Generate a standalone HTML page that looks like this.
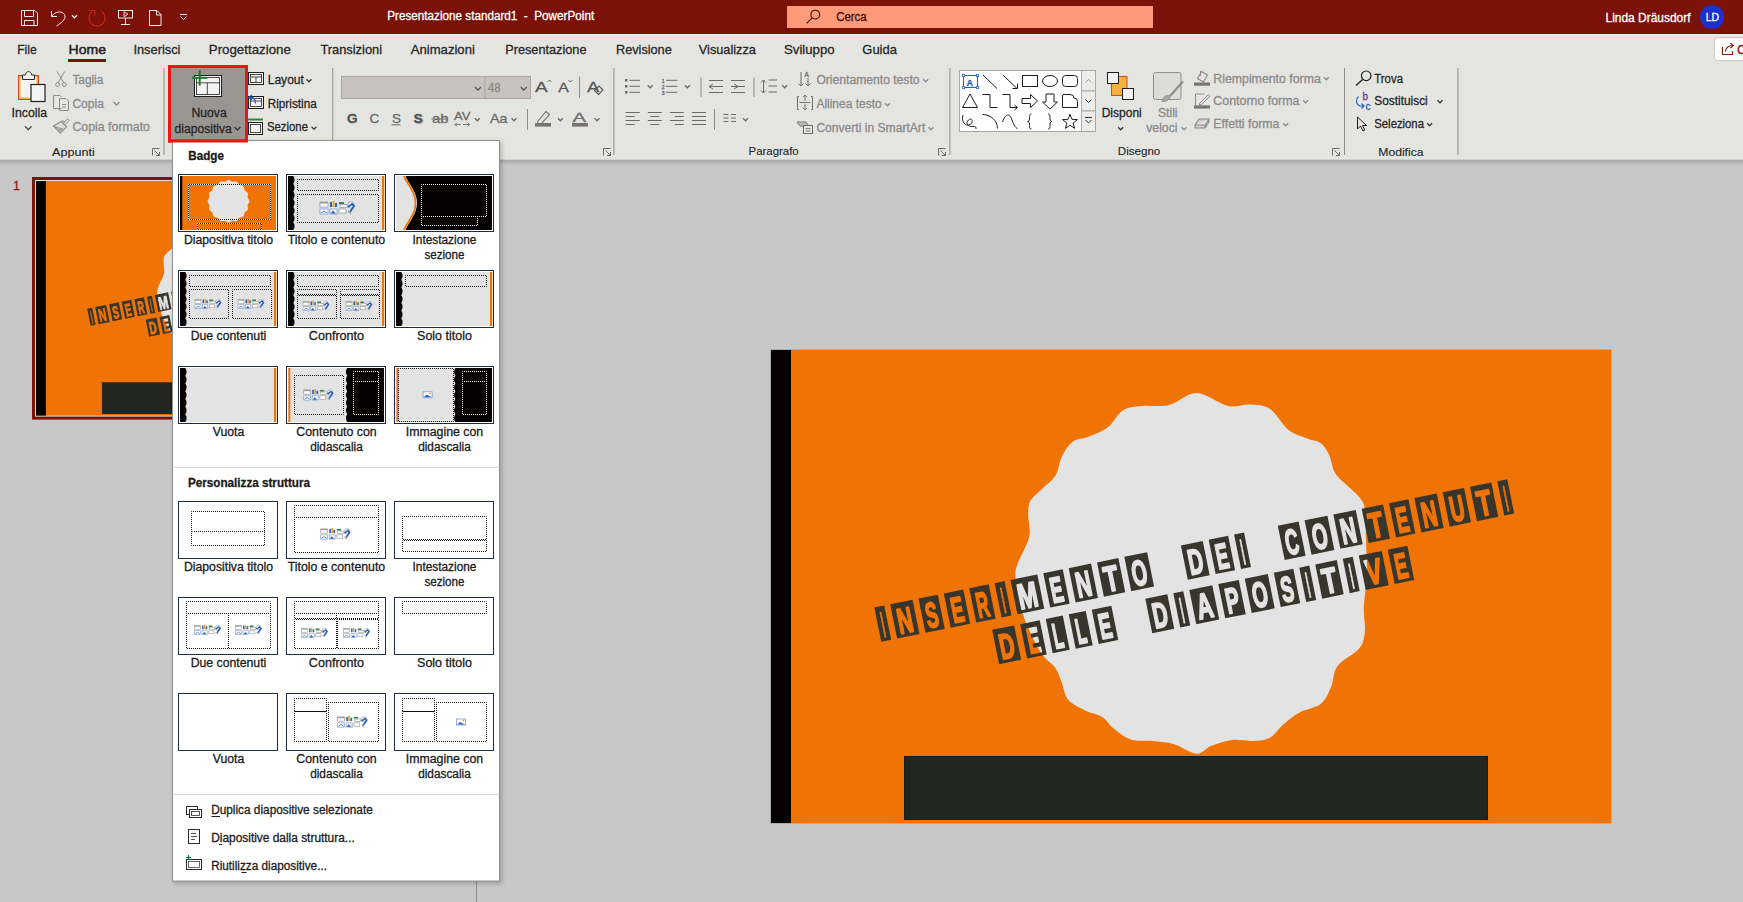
<!DOCTYPE html><html><head><meta charset="utf-8"><style>html,body{margin:0;padding:0;overflow:hidden;background:#c8c8c8}svg{display:block}</style></head><body>
<svg width="1743" height="902" viewBox="0 0 1743 902" font-family="Liberation Sans, sans-serif">
<defs>
<mask id="ttl" maskUnits="userSpaceOnUse" x="0" y="0" width="840" height="473">
<g transform="translate(103.3,257.5) rotate(-11.45)" font-family="Liberation Sans, sans-serif">
<g><rect x="0.00" y="0" width="10.13" height="35" fill="#fff"/><rect x="16.21" y="0" width="22.79" height="35" fill="#fff"/><rect x="45.08" y="0" width="19.75" height="35" fill="#fff"/><rect x="70.91" y="0" width="19.85" height="35" fill="#fff"/><rect x="96.84" y="0" width="19.85" height="35" fill="#fff"/><rect x="122.78" y="0" width="10.13" height="35" fill="#fff"/><rect x="138.98" y="0" width="27.35" height="35" fill="#fff"/><rect x="172.41" y="0" width="19.85" height="35" fill="#fff"/><rect x="198.35" y="0" width="22.79" height="35" fill="#fff"/><rect x="227.22" y="0" width="21.78" height="35" fill="#fff"/><rect x="255.07" y="0" width="23.30" height="35" fill="#fff"/><rect x="312.81" y="0" width="22.29" height="35" fill="#fff"/><rect x="341.18" y="0" width="19.85" height="35" fill="#fff"/><rect x="367.11" y="0" width="10.13" height="35" fill="#fff"/><rect x="411.68" y="0" width="21.27" height="35" fill="#fff"/><rect x="439.03" y="0" width="23.30" height="35" fill="#fff"/><rect x="468.41" y="0" width="22.79" height="35" fill="#fff"/><rect x="497.28" y="0" width="21.78" height="35" fill="#fff"/><rect x="525.14" y="0" width="19.85" height="35" fill="#fff"/><rect x="551.07" y="0" width="22.79" height="35" fill="#fff"/><rect x="579.94" y="0" width="21.78" height="35" fill="#fff"/><rect x="607.80" y="0" width="21.78" height="35" fill="#fff"/><rect x="635.66" y="0" width="10.13" height="35" fill="#fff"/><text x="5.06" y="31" font-size="35.5" font-weight="bold" text-anchor="middle" fill="#000" stroke="#000" stroke-width="2" stroke-linejoin="round" textLength="2.40" lengthAdjust="spacingAndGlyphs">I</text><text x="27.60" y="31" font-size="35.5" font-weight="bold" text-anchor="middle" fill="#000" stroke="#000" stroke-width="2" stroke-linejoin="round" textLength="15.29" lengthAdjust="spacingAndGlyphs">N</text><text x="54.96" y="31" font-size="35.5" font-weight="bold" text-anchor="middle" fill="#000" stroke="#000" stroke-width="2" stroke-linejoin="round" textLength="12.25" lengthAdjust="spacingAndGlyphs">S</text><text x="80.84" y="31" font-size="35.5" font-weight="bold" text-anchor="middle" fill="#000" stroke="#000" stroke-width="2" stroke-linejoin="round" textLength="12.35" lengthAdjust="spacingAndGlyphs">E</text><text x="106.77" y="31" font-size="35.5" font-weight="bold" text-anchor="middle" fill="#000" stroke="#000" stroke-width="2" stroke-linejoin="round" textLength="12.35" lengthAdjust="spacingAndGlyphs">R</text><text x="127.84" y="31" font-size="35.5" font-weight="bold" text-anchor="middle" fill="#000" stroke="#000" stroke-width="2" stroke-linejoin="round" textLength="2.40" lengthAdjust="spacingAndGlyphs">I</text><text x="152.66" y="31" font-size="35.5" font-weight="bold" text-anchor="middle" fill="#000" stroke="#000" stroke-width="2" stroke-linejoin="round" textLength="19.85" lengthAdjust="spacingAndGlyphs">M</text><text x="182.34" y="31" font-size="35.5" font-weight="bold" text-anchor="middle" fill="#000" stroke="#000" stroke-width="2" stroke-linejoin="round" textLength="12.35" lengthAdjust="spacingAndGlyphs">E</text><text x="209.74" y="31" font-size="35.5" font-weight="bold" text-anchor="middle" fill="#000" stroke="#000" stroke-width="2" stroke-linejoin="round" textLength="15.29" lengthAdjust="spacingAndGlyphs">N</text><text x="238.11" y="31" font-size="35.5" font-weight="bold" text-anchor="middle" fill="#000" stroke="#000" stroke-width="2" stroke-linejoin="round" textLength="14.28" lengthAdjust="spacingAndGlyphs">T</text><text x="266.72" y="31" font-size="35.5" font-weight="bold" text-anchor="middle" fill="#000" stroke="#000" stroke-width="2" stroke-linejoin="round" textLength="15.30" lengthAdjust="spacingAndGlyphs">O</text><text x="323.96" y="31" font-size="35.5" font-weight="bold" text-anchor="middle" fill="#000" stroke="#000" stroke-width="2" stroke-linejoin="round" textLength="14.79" lengthAdjust="spacingAndGlyphs">D</text><text x="351.11" y="31" font-size="35.5" font-weight="bold" text-anchor="middle" fill="#000" stroke="#000" stroke-width="2" stroke-linejoin="round" textLength="12.35" lengthAdjust="spacingAndGlyphs">E</text><text x="372.18" y="31" font-size="35.5" font-weight="bold" text-anchor="middle" fill="#000" stroke="#000" stroke-width="2" stroke-linejoin="round" textLength="2.40" lengthAdjust="spacingAndGlyphs">I</text><text x="422.32" y="31" font-size="35.5" font-weight="bold" text-anchor="middle" fill="#000" stroke="#000" stroke-width="2" stroke-linejoin="round" textLength="13.27" lengthAdjust="spacingAndGlyphs">C</text><text x="450.68" y="31" font-size="35.5" font-weight="bold" text-anchor="middle" fill="#000" stroke="#000" stroke-width="2" stroke-linejoin="round" textLength="15.30" lengthAdjust="spacingAndGlyphs">O</text><text x="479.81" y="31" font-size="35.5" font-weight="bold" text-anchor="middle" fill="#000" stroke="#000" stroke-width="2" stroke-linejoin="round" textLength="15.29" lengthAdjust="spacingAndGlyphs">N</text><text x="508.17" y="31" font-size="35.5" font-weight="bold" text-anchor="middle" fill="#000" stroke="#000" stroke-width="2" stroke-linejoin="round" textLength="14.28" lengthAdjust="spacingAndGlyphs">T</text><text x="535.07" y="31" font-size="35.5" font-weight="bold" text-anchor="middle" fill="#000" stroke="#000" stroke-width="2" stroke-linejoin="round" textLength="12.35" lengthAdjust="spacingAndGlyphs">E</text><text x="562.47" y="31" font-size="35.5" font-weight="bold" text-anchor="middle" fill="#000" stroke="#000" stroke-width="2" stroke-linejoin="round" textLength="15.29" lengthAdjust="spacingAndGlyphs">N</text><text x="590.83" y="31" font-size="35.5" font-weight="bold" text-anchor="middle" fill="#000" stroke="#000" stroke-width="2" stroke-linejoin="round" textLength="14.28" lengthAdjust="spacingAndGlyphs">U</text><text x="618.69" y="31" font-size="35.5" font-weight="bold" text-anchor="middle" fill="#000" stroke="#000" stroke-width="2" stroke-linejoin="round" textLength="14.28" lengthAdjust="spacingAndGlyphs">T</text><text x="640.72" y="31" font-size="35.5" font-weight="bold" text-anchor="middle" fill="#000" stroke="#000" stroke-width="2" stroke-linejoin="round" textLength="2.40" lengthAdjust="spacingAndGlyphs">I</text></g>
<g transform="translate(111.09,45.3)"><rect x="0.00" y="0" width="22.44" height="35" fill="#fff"/><rect x="28.56" y="0" width="19.99" height="35" fill="#fff"/><rect x="54.67" y="0" width="17.34" height="35" fill="#fff"/><rect x="78.13" y="0" width="17.34" height="35" fill="#fff"/><rect x="101.59" y="0" width="19.99" height="35" fill="#fff"/><rect x="156.26" y="0" width="22.44" height="35" fill="#fff"/><rect x="184.82" y="0" width="10.20" height="35" fill="#fff"/><rect x="201.14" y="0" width="23.46" height="35" fill="#fff"/><rect x="230.72" y="0" width="20.91" height="35" fill="#fff"/><rect x="257.75" y="0" width="23.46" height="35" fill="#fff"/><rect x="287.33" y="0" width="19.89" height="35" fill="#fff"/><rect x="313.34" y="0" width="10.20" height="35" fill="#fff"/><rect x="329.66" y="0" width="21.93" height="35" fill="#fff"/><rect x="357.71" y="0" width="10.20" height="35" fill="#fff"/><rect x="374.03" y="0" width="23.46" height="35" fill="#fff"/><rect x="403.61" y="0" width="19.99" height="35" fill="#fff"/><text x="11.22" y="31" font-size="35.5" font-weight="bold" text-anchor="middle" fill="#000" stroke="#000" stroke-width="2" stroke-linejoin="round" textLength="14.94" lengthAdjust="spacingAndGlyphs">D</text><text x="38.56" y="31" font-size="35.5" font-weight="bold" text-anchor="middle" fill="#000" stroke="#000" stroke-width="2" stroke-linejoin="round" textLength="12.49" lengthAdjust="spacingAndGlyphs">E</text><text x="63.34" y="31" font-size="35.5" font-weight="bold" text-anchor="middle" fill="#000" stroke="#000" stroke-width="2" stroke-linejoin="round" textLength="9.84" lengthAdjust="spacingAndGlyphs">L</text><text x="86.80" y="31" font-size="35.5" font-weight="bold" text-anchor="middle" fill="#000" stroke="#000" stroke-width="2" stroke-linejoin="round" textLength="9.84" lengthAdjust="spacingAndGlyphs">L</text><text x="111.59" y="31" font-size="35.5" font-weight="bold" text-anchor="middle" fill="#000" stroke="#000" stroke-width="2" stroke-linejoin="round" textLength="12.49" lengthAdjust="spacingAndGlyphs">E</text><text x="167.48" y="31" font-size="35.5" font-weight="bold" text-anchor="middle" fill="#000" stroke="#000" stroke-width="2" stroke-linejoin="round" textLength="14.94" lengthAdjust="spacingAndGlyphs">D</text><text x="189.92" y="31" font-size="35.5" font-weight="bold" text-anchor="middle" fill="#000" stroke="#000" stroke-width="2" stroke-linejoin="round" textLength="2.40" lengthAdjust="spacingAndGlyphs">I</text><text x="212.87" y="31" font-size="35.5" font-weight="bold" text-anchor="middle" fill="#000" stroke="#000" stroke-width="2" stroke-linejoin="round" textLength="15.96" lengthAdjust="spacingAndGlyphs">A</text><text x="241.18" y="31" font-size="35.5" font-weight="bold" text-anchor="middle" fill="#000" stroke="#000" stroke-width="2" stroke-linejoin="round" textLength="13.41" lengthAdjust="spacingAndGlyphs">P</text><text x="269.48" y="31" font-size="35.5" font-weight="bold" text-anchor="middle" fill="#000" stroke="#000" stroke-width="2" stroke-linejoin="round" textLength="15.46" lengthAdjust="spacingAndGlyphs">O</text><text x="297.28" y="31" font-size="35.5" font-weight="bold" text-anchor="middle" fill="#000" stroke="#000" stroke-width="2" stroke-linejoin="round" textLength="12.39" lengthAdjust="spacingAndGlyphs">S</text><text x="318.44" y="31" font-size="35.5" font-weight="bold" text-anchor="middle" fill="#000" stroke="#000" stroke-width="2" stroke-linejoin="round" textLength="2.40" lengthAdjust="spacingAndGlyphs">I</text><text x="340.63" y="31" font-size="35.5" font-weight="bold" text-anchor="middle" fill="#000" stroke="#000" stroke-width="2" stroke-linejoin="round" textLength="14.43" lengthAdjust="spacingAndGlyphs">T</text><text x="362.81" y="31" font-size="35.5" font-weight="bold" text-anchor="middle" fill="#000" stroke="#000" stroke-width="2" stroke-linejoin="round" textLength="2.40" lengthAdjust="spacingAndGlyphs">I</text><text x="385.76" y="31" font-size="35.5" font-weight="bold" text-anchor="middle" fill="#000" stroke="#000" stroke-width="2" stroke-linejoin="round" textLength="15.96" lengthAdjust="spacingAndGlyphs">V</text><text x="413.61" y="31" font-size="35.5" font-weight="bold" text-anchor="middle" fill="#000" stroke="#000" stroke-width="2" stroke-linejoin="round" textLength="12.49" lengthAdjust="spacingAndGlyphs">E</text></g>
</g></mask>
<g id="slide">
<rect x="0" y="0" width="840" height="473" fill="#f07305" />
<rect x="0" y="0" width="20" height="473" fill="#040100" />
<path d="M425.50 43.10 C435.27 43.27 447.98 54.08 456.90 56.00 C465.82 57.92 471.98 54.10 479.00 54.60 C486.02 55.10 492.50 54.72 499.00 59.00 C505.50 63.28 511.67 75.35 518.00 80.30 C524.33 85.25 531.73 86.58 537.00 88.70 C542.27 90.82 546.10 90.37 549.60 93.00 C553.10 95.63 555.53 99.42 558.00 104.50 C560.47 109.58 560.90 117.92 564.40 123.50 C567.90 129.08 574.80 133.78 579.00 138.00 C583.20 142.22 587.10 145.13 589.60 148.80 C592.10 152.47 593.10 153.13 594.00 160.00 C594.90 166.87 594.67 179.17 595.00 190.00 C595.33 200.83 596.37 213.83 596.00 225.00 C595.63 236.17 593.17 247.43 592.80 257.00 C592.43 266.57 594.68 275.35 593.80 282.40 C592.92 289.45 592.05 293.70 587.50 299.30 C582.95 304.90 571.08 309.68 566.50 316.00 C561.92 322.32 562.82 330.87 560.00 337.20 C557.18 343.53 554.85 349.78 549.60 354.00 C544.35 358.22 534.82 359.00 528.50 362.50 C522.18 366.00 516.62 370.80 511.70 375.00 C506.78 379.20 503.92 385.03 499.00 387.70 C494.08 390.37 488.53 390.62 482.20 391.00 C475.87 391.38 468.03 389.17 461.00 390.00 C453.97 390.83 445.92 393.72 440.00 396.00 C434.08 398.28 431.75 404.03 425.50 403.70 C419.25 403.37 409.83 396.12 402.50 394.00 C395.17 391.88 388.52 391.70 381.50 391.00 C374.48 390.30 366.73 391.75 360.40 389.80 C354.07 387.85 348.42 383.15 343.50 379.30 C338.58 375.45 335.82 369.85 330.90 366.70 C325.98 363.55 319.62 363.22 314.00 360.40 C308.38 357.58 301.05 354.37 297.20 349.80 C293.35 345.23 293.00 338.27 290.90 333.00 C288.80 327.73 287.75 322.77 284.60 318.20 C281.45 313.63 276.27 311.63 272.00 305.60 C267.73 299.57 262.83 290.43 259.00 282.00 C255.17 273.57 251.42 264.07 249.00 255.00 C246.58 245.93 244.90 234.43 244.50 227.60 C244.10 220.77 244.32 220.82 246.60 214.00 C248.88 207.18 256.43 194.77 258.20 186.70 C259.97 178.63 257.02 171.57 257.20 165.60 C257.38 159.63 256.85 155.47 259.30 150.90 C261.75 146.33 267.68 142.42 271.90 138.20 C276.12 133.98 281.43 130.87 284.60 125.60 C287.77 120.33 288.10 112.22 290.90 106.60 C293.70 100.98 296.83 95.23 301.40 91.90 C305.97 88.57 312.33 89.07 318.30 86.60 C324.27 84.13 331.58 81.48 337.20 77.10 C342.82 72.72 346.37 63.82 352.00 60.30 C357.63 56.78 363.28 56.88 371.00 56.00 C378.72 55.12 389.22 57.15 398.30 55.00 C407.38 52.85 415.73 42.93 425.50 43.10 Z" fill="#e3e3e3"/>
<rect x="133.5" y="406.5" width="583" height="63" fill="#22261e" stroke="#1b1d17"/>
<rect x="0" y="0" width="840" height="473" fill="#38362c" mask="url(#ttl)"/>
</g>
</defs>
<rect x="0" y="0" width="1743" height="34" fill="#7b1109" />
<rect x="0" y="33" width="1743" height="1" fill="#6e0c05" />
<rect x="0" y="34" width="1743" height="126" fill="#e4e4e0" />
<rect x="0" y="34" width="1743" height="1" fill="#eef0ec" />
<path d="M21.5 10.5 H35 L37.5 13 V25.5 H21.5 Z" fill="none" stroke="#f4eeee" stroke-width="1" />
<path d="M24.5 10.5 V16.5 H33.5 V10.5" fill="none" stroke="#f4eeee" stroke-width="1" />
<path d="M24.5 25.5 V20.5 H34 V25.5" fill="none" stroke="#f4eeee" stroke-width="1" />
<path d="M51.5 11 V16.5 H57" fill="none" stroke="#f4eeee" stroke-width="1" />
<path d="M51.8 16.3 C55 11.5 62 10.5 64.5 14.5 C66.5 18 63 22 56.5 26" fill="none" stroke="#f4eeee" stroke-width="1" />
<path d="M72.0 15.2 L74.5 17.8 L77.0 15.2" fill="none" stroke="#f4eeee" stroke-width="1.25" />
<path d="M101.36 11.29 A8 8 0 1 1 91.97 11.78" fill="none" stroke="#c8281a" stroke-width="1.1" />
<path d="M89 10.5 H94.8 V15.8" fill="none" stroke="#c8281a" stroke-width="1.1" />
<rect x="118.5" y="10.5" width="14" height="7.5" fill="none" stroke="#f4eeee" stroke-width="1" />
<path d="M124 11.8 L128 14.2 L124 16.6 Z" fill="none" stroke="#f4eeee" stroke-width="0.9" />
<line x1="125.5" y1="18" x2="125.5" y2="24.5" stroke="#f4eeee" stroke-width="1" />
<line x1="121" y1="24.5" x2="130" y2="24.5" stroke="#f4eeee" stroke-width="1" />
<path d="M149.5 10.5 H157 L161 14.5 V25.5 H149.5 Z" fill="none" stroke="#f4eeee" stroke-width="1" />
<path d="M156.5 10.5 V15 H161" fill="none" stroke="#f4eeee" stroke-width="1" />
<line x1="180" y1="14.5" x2="187" y2="14.5" stroke="#f4eeee" stroke-width="1" />
<path d="M180.5 16.5 L183.5 19.5 L186.5 16.5" fill="none" stroke="#f4eeee" stroke-width="1" />
<text x="387.20" y="20.20" font-size="12" fill="#ffffff" textLength="206.96" lengthAdjust="spacingAndGlyphs"  stroke="#ffffff" stroke-width="0.28">Presentazione standard1 &#160;- &#160;PowerPoint</text>
<rect x="787" y="6" width="366" height="22" fill="#fe997a" />
<circle cx="815.3" cy="14.6" r="4.4" fill="none" stroke="#3a0c06" stroke-width="1.1"/>
<line x1="812.2" y1="17.8" x2="806.6" y2="23.4" stroke="#3a0c06" stroke-width="1.2" />
<text x="836.20" y="20.80" font-size="12" fill="#3a0c06" textLength="30.46" lengthAdjust="spacingAndGlyphs"  stroke="#3a0c06" stroke-width="0.28">Cerca</text>
<text x="1605.50" y="21.80" font-size="12" fill="#ffffff" textLength="84.96" lengthAdjust="spacingAndGlyphs"  stroke="#ffffff" stroke-width="0.28">Linda Dräusdorf</text>
<circle cx="1712" cy="17" r="12" fill="#1b2fd3"/>
<text x="1712.50" y="21.00" font-size="10.5" fill="#ffffff" text-anchor="middle"  stroke="#ffffff" stroke-width="0.28">LD</text>
<text x="17.20" y="54.20" font-size="13" fill="#262626" textLength="19.44" lengthAdjust="spacingAndGlyphs"  stroke="#262626" stroke-width="0.28">File</text>
<text x="68.60" y="54.20" font-size="13" fill="#1e1e1e" textLength="37.44" lengthAdjust="spacingAndGlyphs" stroke="#1e1e1e" stroke-width="0.45">Home</text>
<text x="133.40" y="54.20" font-size="13" fill="#262626" textLength="47.04" lengthAdjust="spacingAndGlyphs"  stroke="#262626" stroke-width="0.28">Inserisci</text>
<text x="208.80" y="54.20" font-size="13" fill="#262626" textLength="82.04" lengthAdjust="spacingAndGlyphs"  stroke="#262626" stroke-width="0.28">Progettazione</text>
<text x="320.40" y="54.20" font-size="13" fill="#262626" textLength="61.64" lengthAdjust="spacingAndGlyphs"  stroke="#262626" stroke-width="0.28">Transizioni</text>
<text x="410.80" y="54.20" font-size="13" fill="#262626" textLength="64.04" lengthAdjust="spacingAndGlyphs"  stroke="#262626" stroke-width="0.28">Animazioni</text>
<text x="505.20" y="54.20" font-size="13" fill="#262626" textLength="81.34" lengthAdjust="spacingAndGlyphs"  stroke="#262626" stroke-width="0.28">Presentazione</text>
<text x="616.00" y="54.20" font-size="13" fill="#262626" textLength="55.74" lengthAdjust="spacingAndGlyphs"  stroke="#262626" stroke-width="0.28">Revisione</text>
<text x="698.80" y="54.20" font-size="13" fill="#262626" textLength="57.04" lengthAdjust="spacingAndGlyphs"  stroke="#262626" stroke-width="0.28">Visualizza</text>
<text x="784.00" y="54.20" font-size="13" fill="#262626" textLength="50.64" lengthAdjust="spacingAndGlyphs"  stroke="#262626" stroke-width="0.28">Sviluppo</text>
<text x="862.30" y="54.20" font-size="13" fill="#262626" textLength="34.64" lengthAdjust="spacingAndGlyphs"  stroke="#262626" stroke-width="0.28">Guida</text>
<rect x="68" y="59" width="38" height="3" fill="#7b1109" />
<rect x="1714.5" y="37.5" width="60" height="23" rx="3" fill="#ffffff" stroke="#c9c9c6"/>
<path d="M1722.5 47 V54.5 H1732.5 V51" fill="none" stroke="#8b1a10" stroke-width="1.1" />
<path d="M1725.5 51.5 C1726 47 1729 45.5 1733 45.5 M1730.5 43 L1733.3 45.5 L1730.5 48" fill="none" stroke="#8b1a10" stroke-width="1.1" />
<text x="1737.00" y="54.00" font-size="12.5" fill="#8b1a10" stroke="#8b1a10" stroke-width="0.4">C</text>
<rect x="18.5" y="75.5" width="20" height="24" fill="#f6b143" stroke="#d4461f" stroke-width="1"/>
<rect x="20.5" y="77.5" width="16" height="20" fill="#f3f3f3" />
<path d="M22.5 79.5 V75 H25.5 C25.5 70.5 31.5 70.5 31.5 75 H34.5 V79.5 Z" fill="#f3f3f3" stroke="#2b2b2b" stroke-width="1" />
<rect x="31" y="84.5" width="14" height="17" fill="#f3f3f3" stroke="#1e1e1e" stroke-width="1.2" />
<text x="11.60" y="117.00" font-size="12" fill="#262626" textLength="35.36" lengthAdjust="spacingAndGlyphs"  stroke="#262626" stroke-width="0.28">Incolla</text>
<path d="M25.1 126.4 L28.3 129.6 L31.5 126.4" fill="none" stroke="#333" stroke-width="1.25" />
<circle cx="57.6" cy="84.6" r="1.9" fill="none" stroke="#8a8a8a"/>
<circle cx="64.3" cy="84.6" r="1.9" fill="none" stroke="#8a8a8a"/>
<path d="M57 71.5 L63.6 82.6 M64.6 71.5 L58.2 82.6" fill="none" stroke="#8a8a8a" stroke-width="1" />
<text x="72.40" y="84.00" font-size="12" fill="#8a8a8a" textLength="30.96" lengthAdjust="spacingAndGlyphs"  stroke="#8a8a8a" stroke-width="0.28">Taglia</text>
<path d="M61.5 108.5 H53.5 V95.5 H60 L61.5 97" fill="none" stroke="#8a8a8a" stroke-width="1" />
<path d="M59.5 98.5 H66 L68.5 101 V110.5 H59.5 Z" fill="none" stroke="#8a8a8a" stroke-width="1" />
<path d="M62 104.5 H66 M62 107 H66" fill="none" stroke="#8a8a8a" stroke-width="1" />
<text x="72.40" y="107.70" font-size="12" fill="#8a8a8a" textLength="31.56" lengthAdjust="spacingAndGlyphs"  stroke="#8a8a8a" stroke-width="0.28">Copia</text>
<path d="M113.5 102.0 L116.5 105.0 L119.5 102.0" fill="none" stroke="#8a8a8a" stroke-width="1.25" />
<path d="M53.4 126 L61.2 121.5 L66.6 126.8 L60.2 133.2 Z" fill="#dcdcd8" stroke="#8a8a8a" stroke-width="1.1" />
<path d="M54.5 126.8 L64 129.5" fill="none" stroke="#8a8a8a" stroke-width="1" />
<path d="M60.2 133.2 L64 129.5 L56 128 Z" fill="#a8a8a8" stroke="none" stroke-width="1" />
<path d="M61.5 121.8 L63 120.5 L64.5 122.5 L63.5 123.5" fill="none" stroke="#8a8a8a" stroke-width="1" />
<path d="M63.3 123 L67.3 119.2 M65 124.8 L68.8 121" fill="none" stroke="#8a8a8a" stroke-width="1" />
<path d="M67.3 119.2 A1.2 1.2 0 0 1 68.8 121" fill="none" stroke="#8a8a8a" stroke-width="1" />
<text x="72.40" y="131.30" font-size="12" fill="#8a8a8a" textLength="77.56" lengthAdjust="spacingAndGlyphs"  stroke="#8a8a8a" stroke-width="0.28">Copia formato</text>
<text x="52.00" y="155.60" font-size="11.5" fill="#262626" textLength="42.92" lengthAdjust="spacingAndGlyphs" stroke="#262626" stroke-width="0.12">Appunti</text>
<path d="M152.5 155.5 V148.5 H159.5" fill="none" stroke="#6a6a6a" stroke-width="1" />
<path d="M154.5 150.5 L159.5 155.5 M156 155.5 H159.5 V152" fill="none" stroke="#6a6a6a" stroke-width="1" />
<rect x="163.5" y="68" width="1" height="87" fill="#8e8e8a" />
<rect x="169.5" y="66.5" width="77" height="74.5" fill="#999591" stroke="#f01414" stroke-width="3" />
<rect x="194.5" y="75.5" width="27" height="21" fill="#f3f3f3" stroke="#1e1e1e" stroke-width="1" />
<rect x="196.5" y="77.5" width="23" height="17" fill="none" stroke="#1e1e1e" stroke-width="0.8" />
<line x1="196.5" y1="82.8" x2="219.5" y2="82.8" stroke="#1e1e1e" stroke-width="0.8" />
<line x1="207.3" y1="82.8" x2="207.3" y2="94.5" stroke="#1e1e1e" stroke-width="0.8" />
<line x1="192" y1="77.8" x2="207.5" y2="77.8" stroke="#1a7a30" stroke-width="2" />
<line x1="199.7" y1="70.2" x2="199.7" y2="85.6" stroke="#1a7a30" stroke-width="2" />
<text x="191.40" y="116.80" font-size="12" fill="#262626" textLength="35.36" lengthAdjust="spacingAndGlyphs"  stroke="#262626" stroke-width="0.28">Nuova</text>
<text x="174.60" y="132.80" font-size="12" fill="#262626" textLength="57.16" lengthAdjust="spacingAndGlyphs"  stroke="#262626" stroke-width="0.28">diapositiva</text>
<path d="M234.4 127.0 L237.4 130.0 L240.4 127.0" fill="none" stroke="#333" stroke-width="1.25" />
<rect x="248.5" y="72.5" width="15" height="12" fill="#f3f3f3" stroke="#1e1e1e" stroke-width="1" />
<rect x="250.5" y="74.5" width="11" height="8" fill="none" stroke="#1e1e1e" stroke-width="0.8" />
<line x1="250.5" y1="77" x2="261.5" y2="77" stroke="#1e1e1e" stroke-width="0.8" />
<line x1="256" y1="77" x2="256" y2="82.5" stroke="#1e1e1e" stroke-width="0.8" />
<text x="267.70" y="83.90" font-size="12" fill="#262626" textLength="36.26" lengthAdjust="spacingAndGlyphs"  stroke="#262626" stroke-width="0.28">Layout</text>
<path d="M306.5 79.2 L309.0 81.8 L311.5 79.2" fill="none" stroke="#333" stroke-width="1.25" />
<rect x="248.5" y="96.5" width="15" height="12" fill="#f3f3f3" stroke="#1e1e1e" stroke-width="1" />
<rect x="250.5" y="98.5" width="11" height="8" fill="none" stroke="#1e1e1e" stroke-width="0.8" />
<line x1="250.5" y1="101" x2="261.5" y2="101" stroke="#1e1e1e" stroke-width="0.8" />
<path d="M255.5 103.5 C255.5 99 253.5 97 249.5 97.5 M251.8 95 L249.2 97.5 L251.8 100" fill="none" stroke="#1d5dc4" stroke-width="1.3" />
<text x="267.70" y="107.70" font-size="12" fill="#262626" textLength="49.06" lengthAdjust="spacingAndGlyphs"  stroke="#262626" stroke-width="0.28">Ripristina</text>
<rect x="248" y="118.5" width="15" height="2" fill="#2a8a3a" />
<rect x="248.5" y="122.5" width="14" height="12" fill="#f3f3f3" stroke="#1e1e1e" stroke-width="1" />
<rect x="250.5" y="124.5" width="10" height="8" fill="none" stroke="#1e1e1e" stroke-width="0.8" />
<text x="267.00" y="131.30" font-size="12" fill="#262626" textLength="40.96" lengthAdjust="spacingAndGlyphs"  stroke="#262626" stroke-width="0.28">Sezione</text>
<path d="M311.5 126.8 L314.0 129.2 L316.5 126.8" fill="none" stroke="#333" stroke-width="1.25" />
<rect x="332.3" y="68" width="1" height="87" fill="#8e8e8a" />
<rect x="341.5" y="76.5" width="189" height="22" fill="#c7c4bf" stroke="#a9a6a1" stroke-width="1" />
<rect x="484.5" y="77" width="1" height="21" fill="#a9a6a1" />
<path d="M475.0 87.0 L478.0 90.0 L481.0 87.0" fill="none" stroke="#555" stroke-width="1.25" />
<path d="M520.8 87.0 L523.8 90.0 L526.8 87.0" fill="none" stroke="#555" stroke-width="1.25" />
<text x="488.00" y="92.00" font-size="12" fill="#8c8478" textLength="12.46" lengthAdjust="spacingAndGlyphs"  stroke="#8c8478" stroke-width="0.28">48</text>
<text x="535.00" y="91.60" font-size="15" fill="#555" textLength="12.70" lengthAdjust="spacingAndGlyphs"  stroke="#555" stroke-width="0.28">A</text>
<path d="M547.5 82 L549.5 80 L551.5 82" fill="none" stroke="#555" stroke-width="0.9" />
<text x="558.30" y="91.60" font-size="12.5" fill="#555" textLength="10.50" lengthAdjust="spacingAndGlyphs"  stroke="#555" stroke-width="0.28">A</text>
<path d="M568.5 80 L570.5 82 L572.5 80" fill="none" stroke="#555" stroke-width="0.9" />
<rect x="579" y="76.5" width="1" height="21.5" fill="#8e8e8a" />
<text x="587.00" y="91.50" font-size="15" fill="#555" textLength="12.20" lengthAdjust="spacingAndGlyphs"  stroke="#555" stroke-width="0.28">A</text>
<path d="M594.5 90.5 L599 86 L603 90 L598.5 94.5 Z" fill="none" stroke="#555" stroke-width="1.1" />
<text x="347.00" y="123.30" font-size="13" fill="#505050" font-weight="bold" textLength="10.54" lengthAdjust="spacingAndGlyphs"  stroke="#505050" stroke-width="0.28">G</text>
<text x="369.60" y="123.30" font-size="13" fill="#6a6a6a" textLength="9.74" lengthAdjust="spacingAndGlyphs"  stroke="#6a6a6a" stroke-width="0.28">C</text>
<text x="392.00" y="123.00" font-size="12.5" fill="#6a6a6a" textLength="9.00" lengthAdjust="spacingAndGlyphs"  stroke="#6a6a6a" stroke-width="0.28">S</text>
<line x1="391.5" y1="124.8" x2="400.5" y2="124.8" stroke="#6a6a6a" stroke-width="1" />
<text x="414.50" y="124.00" font-size="13.5" fill="#bcbcbc" font-weight="bold" textLength="9.28" lengthAdjust="spacingAndGlyphs"  stroke="#bcbcbc" stroke-width="0.28">S</text>
<text x="413.50" y="123.30" font-size="13.5" fill="#505050" font-weight="bold" textLength="9.28" lengthAdjust="spacingAndGlyphs"  stroke="#505050" stroke-width="0.28">S</text>
<text x="432.00" y="123.30" font-size="12.5" fill="#6a6a6a" textLength="16.50" lengthAdjust="spacingAndGlyphs"  stroke="#6a6a6a" stroke-width="0.28">ab</text>
<line x1="431.5" y1="119" x2="447.5" y2="119" stroke="#6a6a6a" stroke-width="1" />
<text x="454.00" y="119.50" font-size="11" fill="#6a6a6a" textLength="16.38" lengthAdjust="spacingAndGlyphs"  stroke="#6a6a6a" stroke-width="0.28">AV</text>
<path d="M455 124.5 H461 M455 124.5 L457 122.5 M455 124.5 L457 126.5 M463 124.5 H469.5 M469.5 124.5 L467.5 122.5 M469.5 124.5 L467.5 126.5" fill="none" stroke="#6a6a6a" stroke-width="0.9" />
<path d="M474.8 118.2 L477.3 120.8 L479.8 118.2" fill="none" stroke="#6a6a6a" stroke-width="1.25" />
<text x="490.00" y="123.30" font-size="13" fill="#6a6a6a" textLength="17.44" lengthAdjust="spacingAndGlyphs"  stroke="#6a6a6a" stroke-width="0.28">Aa</text>
<path d="M511.5 118.2 L514.0 120.8 L516.5 118.2" fill="none" stroke="#6a6a6a" stroke-width="1.25" />
<rect x="527" y="109" width="1" height="21" fill="#8e8e8a" />
<path d="M538 121 L546 111.5 L549.5 114.5 L541.5 123.5 L537.5 123.5 Z" fill="none" stroke="#6a6a6a" stroke-width="1.1" />
<rect x="535" y="123" width="16" height="3.6" fill="#7a746e" />
<path d="M557.9 118.2 L560.4 120.8 L562.9 118.2" fill="none" stroke="#6a6a6a" stroke-width="1.25" />
<text x="572.50" y="121.50" font-size="13.5" fill="#6a6a6a" textLength="13.58" lengthAdjust="spacingAndGlyphs"  stroke="#6a6a6a" stroke-width="0.28">A</text>
<rect x="572" y="123" width="16" height="3.6" fill="#7a746e" />
<path d="M594.5 118.2 L597.0 120.8 L599.5 118.2" fill="none" stroke="#6a6a6a" stroke-width="1.25" />
<path d="M603.5 155.5 V148.5 H610.5" fill="none" stroke="#6a6a6a" stroke-width="1" />
<path d="M605.5 150.5 L610.5 155.5 M607 155.5 H610.5 V152" fill="none" stroke="#6a6a6a" stroke-width="1" />
<rect x="613.4" y="68" width="1" height="87" fill="#8e8e8a" />
<rect x="625" y="79" width="2.5" height="2.5" fill="#6a6a6a" />
<rect x="625" y="85" width="2.5" height="2.5" fill="#6a6a6a" />
<rect x="625" y="91" width="2.5" height="2.5" fill="#6a6a6a" />
<line x1="629.5" y1="80.3" x2="640.0" y2="80.3" stroke="#6a6a6a" stroke-width="1" />
<line x1="629.5" y1="86.3" x2="640.0" y2="86.3" stroke="#6a6a6a" stroke-width="1" />
<line x1="629.5" y1="92.3" x2="640.0" y2="92.3" stroke="#6a6a6a" stroke-width="1" />
<path d="M647.7 85.2 L650.2 87.8 L652.7 85.2" fill="none" stroke="#6a6a6a" stroke-width="1.25" />
<text x="661.80" y="82.50" font-size="5" fill="#6a6a6a"  stroke="#6a6a6a" stroke-width="0.28">1</text>
<text x="661.80" y="88.50" font-size="5" fill="#6a6a6a"  stroke="#6a6a6a" stroke-width="0.28">2</text>
<text x="661.80" y="94.50" font-size="5" fill="#6a6a6a"  stroke="#6a6a6a" stroke-width="0.28">3</text>
<line x1="666" y1="80.3" x2="677.3" y2="80.3" stroke="#6a6a6a" stroke-width="1" />
<line x1="666" y1="86.3" x2="677.3" y2="86.3" stroke="#6a6a6a" stroke-width="1" />
<line x1="666" y1="92.3" x2="677.3" y2="92.3" stroke="#6a6a6a" stroke-width="1" />
<path d="M684.8 85.2 L687.3 87.8 L689.8 85.2" fill="none" stroke="#6a6a6a" stroke-width="1.25" />
<rect x="700.5" y="77.5" width="1" height="19.5" fill="#8e8e8a" />
<line x1="709" y1="80.5" x2="723" y2="80.5" stroke="#6a6a6a" stroke-width="1" />
<line x1="709" y1="86.5" x2="723" y2="86.5" stroke="#6a6a6a" stroke-width="1" />
<line x1="709" y1="92.5" x2="723" y2="92.5" stroke="#6a6a6a" stroke-width="1" />
<path d="M709 86.5 L713 84 M709 86.5 L713 89 M709 86.5 H716" fill="none" stroke="#6a6a6a" stroke-width="1" />
<line x1="731" y1="80.5" x2="745" y2="80.5" stroke="#6a6a6a" stroke-width="1" />
<line x1="731" y1="86.5" x2="745" y2="86.5" stroke="#6a6a6a" stroke-width="1" />
<line x1="731" y1="92.5" x2="745" y2="92.5" stroke="#6a6a6a" stroke-width="1" />
<path d="M738 86.5 L734 84 M738 86.5 L734 89 M738 86.5 H731" fill="none" stroke="#6a6a6a" stroke-width="1" />
<rect x="753.5" y="77.5" width="1" height="19.5" fill="#8e8e8a" />
<path d="M763.5 80 V93 M761 82.5 L763.5 80 L766 82.5 M761 90.5 L763.5 93 L766 90.5" fill="none" stroke="#6a6a6a" stroke-width="1" />
<line x1="768.5" y1="80" x2="777.0" y2="80" stroke="#6a6a6a" stroke-width="1" />
<line x1="768.5" y1="86" x2="777.0" y2="86" stroke="#6a6a6a" stroke-width="1" />
<line x1="768.5" y1="92" x2="777.0" y2="92" stroke="#6a6a6a" stroke-width="1" />
<path d="M782.2 85.2 L784.7 87.8 L787.2 85.2" fill="none" stroke="#6a6a6a" stroke-width="1.25" />
<path d="M801 72 V86 M798.5 83.5 L801 86 L803.5 83.5 M808 78 V86 M805.5 83.5 L808 86 L810.5 83.5" fill="none" stroke="#6a6a6a" stroke-width="1" />
<text x="804.50" y="76.50" font-size="6.5" fill="#6a6a6a"  stroke="#6a6a6a" stroke-width="0.28">A</text>
<text x="816.40" y="84.00" font-size="12" fill="#8a8a8a" textLength="103.16" lengthAdjust="spacingAndGlyphs"  stroke="#8a8a8a" stroke-width="0.28">Orientamento testo</text>
<path d="M923.2 79.2 L925.7 81.8 L928.2 79.2" fill="none" stroke="#8a8a8a" stroke-width="1.25" />
<path d="M799 96.5 H797.5 V109.5 H799 M811 96.5 H812.5 V109.5 H811" fill="none" stroke="#6a6a6a" stroke-width="1" />
<path d="M805 95 V101 M803 97 L805 95 L807 97 M805 104 V110 M803 108 L805 110 L807 108 M799.5 102.5 H810.5" fill="none" stroke="#6a6a6a" stroke-width="0.9" />
<text x="816.40" y="108.20" font-size="12" fill="#8a8a8a" textLength="65.26" lengthAdjust="spacingAndGlyphs"  stroke="#8a8a8a" stroke-width="0.28">Allinea testo</text>
<path d="M885.0 103.2 L887.5 105.8 L890.0 103.2" fill="none" stroke="#8a8a8a" stroke-width="1.25" />
<path d="M797 122 H806 L809 126 H800 Z" fill="#bdbdbd" stroke="#6a6a6a" stroke-width="0.9" />
<rect x="803.5" y="125.5" width="9" height="8" fill="#e4e4e0" stroke="#6a6a6a" stroke-width="1" />
<path d="M805.5 128.5 H810.5 M805.5 130.8 H810.5" fill="none" stroke="#6a6a6a" stroke-width="0.8" />
<text x="816.40" y="131.90" font-size="12" fill="#8a8a8a" textLength="108.86" lengthAdjust="spacingAndGlyphs"  stroke="#8a8a8a" stroke-width="0.28">Converti in SmartArt</text>
<path d="M928.5 127.2 L931.0 129.8 L933.5 127.2" fill="none" stroke="#8a8a8a" stroke-width="1.25" />
<line x1="625.7" y1="112.5" x2="639.7" y2="112.5" stroke="#6a6a6a" stroke-width="1" />
<line x1="625.7" y1="116.5" x2="634.7" y2="116.5" stroke="#6a6a6a" stroke-width="1" />
<line x1="625.7" y1="120.5" x2="639.7" y2="120.5" stroke="#6a6a6a" stroke-width="1" />
<line x1="625.7" y1="124.5" x2="634.7" y2="124.5" stroke="#6a6a6a" stroke-width="1" />
<line x1="647.8" y1="112.5" x2="661.8" y2="112.5" stroke="#6a6a6a" stroke-width="1" />
<line x1="650.3" y1="116.5" x2="659.3" y2="116.5" stroke="#6a6a6a" stroke-width="1" />
<line x1="647.8" y1="120.5" x2="661.8" y2="120.5" stroke="#6a6a6a" stroke-width="1" />
<line x1="650.3" y1="124.5" x2="659.3" y2="124.5" stroke="#6a6a6a" stroke-width="1" />
<line x1="669.8" y1="112.5" x2="683.8" y2="112.5" stroke="#6a6a6a" stroke-width="1" />
<line x1="674.8" y1="116.5" x2="683.8" y2="116.5" stroke="#6a6a6a" stroke-width="1" />
<line x1="669.8" y1="120.5" x2="683.8" y2="120.5" stroke="#6a6a6a" stroke-width="1" />
<line x1="674.8" y1="124.5" x2="683.8" y2="124.5" stroke="#6a6a6a" stroke-width="1" />
<line x1="692" y1="112.5" x2="706" y2="112.5" stroke="#6a6a6a" stroke-width="1" />
<line x1="692" y1="116.5" x2="706" y2="116.5" stroke="#6a6a6a" stroke-width="1" />
<line x1="692" y1="120.5" x2="706" y2="120.5" stroke="#6a6a6a" stroke-width="1" />
<line x1="692" y1="124.5" x2="706" y2="124.5" stroke="#6a6a6a" stroke-width="1" />
<rect x="714" y="109" width="1" height="21" fill="#8e8e8a" />
<line x1="723.5" y1="114.5" x2="728.5" y2="114.5" stroke="#6a6a6a" stroke-width="1" />
<line x1="731" y1="114.5" x2="736" y2="114.5" stroke="#6a6a6a" stroke-width="1" />
<line x1="723.5" y1="118.0" x2="728.5" y2="118.0" stroke="#6a6a6a" stroke-width="1" />
<line x1="731" y1="118.0" x2="736" y2="118.0" stroke="#6a6a6a" stroke-width="1" />
<line x1="723.5" y1="121.5" x2="728.5" y2="121.5" stroke="#6a6a6a" stroke-width="1" />
<line x1="731" y1="121.5" x2="736" y2="121.5" stroke="#6a6a6a" stroke-width="1" />
<path d="M743.0 118.2 L745.5 120.8 L748.0 118.2" fill="none" stroke="#6a6a6a" stroke-width="1.25" />
<text x="748.60" y="155.40" font-size="11.5" fill="#262626" textLength="50.12" lengthAdjust="spacingAndGlyphs" stroke="#262626" stroke-width="0.12">Paragrafo</text>
<path d="M938.5 155.5 V148.5 H945.5" fill="none" stroke="#6a6a6a" stroke-width="1" />
<path d="M940.5 150.5 L945.5 155.5 M942 155.5 H945.5 V152" fill="none" stroke="#6a6a6a" stroke-width="1" />
<rect x="949.4" y="68" width="1" height="87" fill="#8e8e8a" />
<rect x="959.5" y="70.5" width="136" height="61" fill="#ffffff" stroke="#a8a8a4" stroke-width="1" />
<rect x="1081.5" y="70.5" width="14" height="20.5" fill="#ececea" stroke="#a8a8a4" stroke-width="1" />
<rect x="1081.5" y="91" width="14" height="20" fill="#ececea" stroke="#a8a8a4" stroke-width="1" />
<rect x="1081.5" y="111" width="14" height="20.5" fill="#ececea" stroke="#a8a8a4" stroke-width="1" />
<path d="M1085.5 82.5 L1088.5 79.5 L1091.5 82.5" fill="none" stroke="#9a9a9a" stroke-width="1" />
<path d="M1085.5 99.5 L1088.5 102.5 L1091.5 99.5" fill="none" stroke="#333" stroke-width="1" />
<line x1="1085" y1="117.5" x2="1092" y2="117.5" stroke="#333" stroke-width="1" />
<path d="M1085.5 120 L1088.5 123 L1091.5 120" fill="none" stroke="#333" stroke-width="1" />
<rect x="963.5" y="75.5" width="14" height="12" fill="none" stroke="#1e5fc0" stroke-width="1" />
<rect x="962.3" y="74.3" width="2.4" height="2.4" fill="#ffffff" stroke="#1e5fc0" stroke-width="0.7" />
<rect x="976.3" y="74.3" width="2.4" height="2.4" fill="#ffffff" stroke="#1e5fc0" stroke-width="0.7" />
<rect x="962.3" y="86.3" width="2.4" height="2.4" fill="#ffffff" stroke="#1e5fc0" stroke-width="0.7" />
<rect x="976.3" y="86.3" width="2.4" height="2.4" fill="#ffffff" stroke="#1e5fc0" stroke-width="0.7" />
<text x="966.50" y="85.50" font-size="9" fill="#1e5fc0" font-weight="bold"  stroke="#1e5fc0" stroke-width="0.28">A</text>
<line x1="983" y1="75" x2="997" y2="88.5" stroke="#1e1e1e" stroke-width="1" />
<line x1="1003" y1="75" x2="1017" y2="88.5" stroke="#1e1e1e" stroke-width="1" />
<path d="M1012.5 88.5 H1017.5 V83.5" fill="none" stroke="#1e1e1e" stroke-width="1" />
<rect x="1022.5" y="75.5" width="15" height="11" fill="none" stroke="#1e1e1e" stroke-width="1" />
<ellipse cx="1050" cy="81" rx="7.5" ry="5.5" fill="none" stroke="#1e1e1e"/>
<rect x="1062.5" y="75.5" width="15" height="11" rx="3" fill="none" stroke="#1e1e1e"/>
<path d="M970 94 L977.5 107.5 H962.5 Z" fill="none" stroke="#1e1e1e" stroke-width="1" />
<path d="M982.5 94.5 H990 V107.5 H997.5" fill="none" stroke="#1e1e1e" stroke-width="1" />
<path d="M1002.5 94.5 H1010 V107.5 H1017 M1014.5 105 L1017.5 107.5 L1014.5 110" fill="none" stroke="#1e1e1e" stroke-width="1" />
<path d="M1022 98.5 H1030.5 V94.5 L1037.5 101 L1030.5 107.5 V103.5 H1022 Z" fill="none" stroke="#1e1e1e" stroke-width="1" />
<path d="M1046 94 H1054 V102 H1057.5 L1050 109 L1042.5 102 H1046 Z" fill="none" stroke="#1e1e1e" stroke-width="1" />
<path d="M1062.5 96 Q1062.5 94.5 1064 94.5 H1070 Q1074 94.5 1074 98 Q1077.5 98 1077.5 101.5 V107.5 H1062.5 Z" fill="none" stroke="#1e1e1e" stroke-width="1" />
<path d="M963 115 C961 121 965 127 970 124.5 C974 122 972 117 968.5 120 C965 123 968 127 973 126.5 C976 126.5 977 128 975.5 129" fill="none" stroke="#1e1e1e" stroke-width="1" />
<path d="M982.5 114.5 C990 114.5 997.5 120 997.5 128.5" fill="none" stroke="#1e1e1e" stroke-width="1" />
<path d="M1002.5 122 C1006 112 1010 114 1012 120 C1014 126 1016 128 1017.5 128.5" fill="none" stroke="#1e1e1e" stroke-width="1" />
<path d="M1031.5 114 C1029.5 114 1029.5 115 1029.5 119 C1029.5 120.5 1028.5 121.5 1027.5 121.5 C1028.5 121.5 1029.5 122.5 1029.5 124 C1029.5 128 1029.5 129 1031.5 129" fill="none" stroke="#1e1e1e" stroke-width="1" />
<path d="M1048 114 C1050 114 1050 115 1050 119 C1050 120.5 1051 121.5 1052 121.5 C1051 121.5 1050 122.5 1050 124 C1050 128 1050 129 1048 129" fill="none" stroke="#1e1e1e" stroke-width="1" />
<path d="M1070.00 114.20 L1071.94 119.33 L1077.42 119.59 L1073.14 123.02 L1074.58 128.31 L1070.00 125.30 L1065.42 128.31 L1066.86 123.02 L1062.58 119.59 L1068.06 119.33 Z" fill="none" stroke="#1e1e1e" stroke-width="1" />
<rect x="1107.5" y="72.5" width="11" height="11" fill="#f3f3f3" stroke="#1e1e1e" stroke-width="1" />
<rect x="1111.5" y="76.5" width="15.5" height="19" fill="#f2b142" stroke="#d04a20" stroke-width="1" />
<rect x="1122.5" y="88.5" width="11" height="11" fill="#f3f3f3" stroke="#1e1e1e" stroke-width="1" />
<rect x="1107.5" y="72.5" width="11" height="11" fill="#f3f3f3" stroke="#1e1e1e" stroke-width="1" />
<text x="1101.70" y="116.70" font-size="12" fill="#262626" textLength="40.06" lengthAdjust="spacingAndGlyphs"  stroke="#262626" stroke-width="0.28">Disponi</text>
<path d="M1118.2 127.2 L1120.7 129.8 L1123.2 127.2" fill="none" stroke="#333" stroke-width="1.25" />
<rect x="1153.5" y="72.5" width="27.5" height="27" rx="2" fill="#dcdcd8" stroke="#8e8e8e"/>
<path d="M1170 96 L1183 81.5" fill="none" stroke="#8e8e8e" stroke-width="2.2" />
<path d="M1162 101.5 C1163 97 1166 94.5 1170 96 C1170 99 1167 101.5 1162 101.5 Z" fill="#a8a8a8" stroke="#8e8e8e" stroke-width="1" />
<text x="1158.00" y="116.70" font-size="12" fill="#8a8a8a" textLength="19.56" lengthAdjust="spacingAndGlyphs"  stroke="#8a8a8a" stroke-width="0.28">Stili</text>
<text x="1146.20" y="132.40" font-size="12" fill="#8a8a8a" textLength="31.36" lengthAdjust="spacingAndGlyphs"  stroke="#8a8a8a" stroke-width="0.28">veloci</text>
<path d="M1181.5 127.2 L1184.0 129.8 L1186.5 127.2" fill="none" stroke="#8a8a8a" stroke-width="1.25" />
<path d="M1197.5 78.5 L1201.5 71.5 L1207.5 75 L1203.5 82 Z M1200.5 71 V76" fill="none" stroke="#8a8a8a" stroke-width="1.1" />
<rect x="1194" y="82.5" width="16" height="3.2" fill="#7a746e" />
<text x="1213.30" y="82.50" font-size="12" fill="#8a8a8a" textLength="107.46" lengthAdjust="spacingAndGlyphs"  stroke="#8a8a8a" stroke-width="0.28">Riempimento forma</text>
<path d="M1323.9 77.2 L1326.4 79.8 L1328.9 77.2" fill="none" stroke="#8a8a8a" stroke-width="1.25" />
<path d="M1195.5 105 V94 H1204 M1199.5 103.5 L1208.5 94.5 L1210 96 L1201 105 H1199.5 Z" fill="none" stroke="#8a8a8a" stroke-width="1" />
<rect x="1194" y="105.4" width="16" height="3.2" fill="#7a746e" />
<text x="1213.30" y="105.30" font-size="12" fill="#8a8a8a" textLength="86.16" lengthAdjust="spacingAndGlyphs"  stroke="#8a8a8a" stroke-width="0.28">Contorno forma</text>
<path d="M1303.1 100.2 L1305.6 102.8 L1308.1 100.2" fill="none" stroke="#8a8a8a" stroke-width="1.25" />
<path d="M1195 125 L1199 119 H1209 L1205 125 Z M1195 125 V128 H1205 L1209 122 V119 M1205 125 V128" fill="#d0d0cc" stroke="#8a8a8a" stroke-width="1.1" />
<text x="1213.30" y="128.20" font-size="12" fill="#8a8a8a" textLength="66.16" lengthAdjust="spacingAndGlyphs"  stroke="#8a8a8a" stroke-width="0.28">Effetti forma</text>
<path d="M1283.2 123.2 L1285.7 125.8 L1288.2 123.2" fill="none" stroke="#8a8a8a" stroke-width="1.25" />
<text x="1117.80" y="155.40" font-size="11.5" fill="#262626" textLength="42.52" lengthAdjust="spacingAndGlyphs" stroke="#262626" stroke-width="0.12">Disegno</text>
<path d="M1332.5 155.5 V148.5 H1339.5" fill="none" stroke="#6a6a6a" stroke-width="1" />
<path d="M1334.5 150.5 L1339.5 155.5 M1336 155.5 H1339.5 V152" fill="none" stroke="#6a6a6a" stroke-width="1" />
<rect x="1344" y="68" width="1" height="87" fill="#8e8e8a" />
<circle cx="1366.2" cy="75.8" r="4.8" fill="none" stroke="#1e1e1e" stroke-width="1.2"/>
<line x1="1362.6" y1="79.4" x2="1356" y2="85.5" stroke="#1e1e1e" stroke-width="1.3" />
<text x="1374.30" y="82.50" font-size="12" fill="#262626" textLength="28.66" lengthAdjust="spacingAndGlyphs"  stroke="#262626" stroke-width="0.28">Trova</text>
<text x="1362.50" y="100.00" font-size="10" fill="#7b2fa8"  stroke="#7b2fa8" stroke-width="0.28">b</text>
<text x="1365.50" y="109.50" font-size="10" fill="#1e5fc0"  stroke="#1e5fc0" stroke-width="0.28">c</text>
<path d="M1358.5 96.5 C1355.5 99 1355.5 104 1360 106 H1364 M1361.5 103.5 L1364 106 L1361.5 108.5" fill="none" stroke="#1e5fc0" stroke-width="1.1" />
<text x="1374.30" y="105.30" font-size="12" fill="#262626" textLength="53.46" lengthAdjust="spacingAndGlyphs"  stroke="#262626" stroke-width="0.28">Sostituisci</text>
<path d="M1437.5 100.2 L1440.0 102.8 L1442.5 100.2" fill="none" stroke="#333" stroke-width="1.25" />
<path d="M1357.5 117 V129 L1360.5 126 L1363 131 L1364.8 130 L1362.5 125.5 H1366.5 Z" fill="none" stroke="#1e1e1e" stroke-width="1" />
<text x="1374.30" y="128.20" font-size="12" fill="#262626" textLength="49.66" lengthAdjust="spacingAndGlyphs"  stroke="#262626" stroke-width="0.28">Seleziona</text>
<path d="M1427.1 123.2 L1429.6 125.8 L1432.1 123.2" fill="none" stroke="#333" stroke-width="1.25" />
<text x="1378.30" y="155.50" font-size="11.5" fill="#262626" textLength="45.22" lengthAdjust="spacingAndGlyphs" stroke="#262626" stroke-width="0.12">Modifica</text>
<rect x="1457.5" y="68" width="1" height="87" fill="#8e8e8a" />
<rect x="0" y="159.5" width="1743" height="1" fill="#bdbdb9" />
<rect x="0" y="160" width="1743" height="742" fill="#c8c8c8" />
<linearGradient id="rsh" x1="0" y1="0" x2="0" y2="1"><stop offset="0" stop-color="#a9a9a9"/><stop offset="1" stop-color="#c8c8c8"/></linearGradient>
<rect x="0" y="160" width="1743" height="6" fill="url(#rsh)" />
<rect x="476" y="160" width="1" height="742" fill="#8e8e8e" />
<text x="13.00" y="190.00" font-size="12" fill="#8b1a10" textLength="6.96" lengthAdjust="spacingAndGlyphs"  stroke="#8b1a10" stroke-width="0.28">1</text>
<rect x="33.5" y="178.5" width="421.6" height="239.6" fill="#dde1e4" stroke="#7b1109" stroke-width="3" />
<use href="#slide" transform="translate(36,181) scale(0.496)"/>
<rect x="770.5" y="349.5" width="841" height="474" fill="#8c96a0" />
<use href="#slide" transform="translate(771,350)"/>
<filter id="msh" x="-10%" y="-10%" width="120%" height="120%"><feGaussianBlur stdDeviation="2.2"/></filter>
<rect x="174" y="142" width="328" height="742" fill="#000" opacity="0.2" filter="url(#msh)"/>
<rect x="172.5" y="140.5" width="327" height="740.5" fill="#ffffff" stroke="#8e8e8a" stroke-width="1" />
<text x="188.30" y="160.00" font-size="12" fill="#1a1a1a" font-weight="bold" textLength="35.66" lengthAdjust="spacingAndGlyphs"  stroke="#1a1a1a" stroke-width="0.28">Badge</text>
<rect x="178.5" y="174.5" width="99" height="57" fill="#ffffff" stroke="#1f2a44" stroke-width="1" />
<rect x="180" y="176" width="96" height="54" fill="#f07305" />
<rect x="180" y="176" width="2.3" height="54" fill="#050100" />
<path d="M249.40 201.30 L249.37 201.67 L249.28 202.04 L249.14 202.40 L248.96 202.76 L248.74 203.11 L248.52 203.45 L248.29 203.78 L248.08 204.11 L247.89 204.43 L247.75 204.76 L247.64 205.10 L247.59 205.44 L247.58 205.80 L247.61 206.16 L247.67 206.54 L247.75 206.93 L247.84 207.33 L247.92 207.73 L247.97 208.14 L247.99 208.53 L247.96 208.91 L247.87 209.28 L247.73 209.62 L247.54 209.94 L247.29 210.23 L247.01 210.50 L246.69 210.75 L246.36 210.98 L246.02 211.21 L245.69 211.43 L245.38 211.65 L245.11 211.89 L244.87 212.15 L244.67 212.43 L244.51 212.74 L244.38 213.08 L244.29 213.44 L244.21 213.82 L244.14 214.22 L244.07 214.62 L243.98 215.02 L243.86 215.40 L243.71 215.76 L243.51 216.08 L243.28 216.36 L243.00 216.61 L242.68 216.80 L242.33 216.96 L241.95 217.08 L241.56 217.18 L241.17 217.26 L240.77 217.33 L240.40 217.41 L240.04 217.51 L239.71 217.64 L239.41 217.80 L239.13 218.01 L238.88 218.25 L238.64 218.53 L238.43 218.84 L238.21 219.17 L237.99 219.51 L237.77 219.85 L237.53 220.17 L237.26 220.46 L236.98 220.71 L236.66 220.90 L236.33 221.05 L235.97 221.13 L235.59 221.17 L235.20 221.15 L234.81 221.10 L234.41 221.03 L234.02 220.94 L233.64 220.86 L233.27 220.80 L232.90 220.77 L232.56 220.78 L232.22 220.84 L231.89 220.94 L231.57 221.09 L231.25 221.28 L230.93 221.49 L230.60 221.72 L230.27 221.95 L229.93 222.16 L229.58 222.34 L229.23 222.48 L228.86 222.57 L228.50 222.60 L228.14 222.57 L227.77 222.48 L227.42 222.34 L227.07 222.16 L226.73 221.95 L226.40 221.72 L226.07 221.49 L225.75 221.28 L225.43 221.09 L225.11 220.94 L224.78 220.84 L224.44 220.78 L224.10 220.77 L223.73 220.80 L223.36 220.86 L222.98 220.94 L222.59 221.03 L222.19 221.10 L221.80 221.15 L221.41 221.17 L221.03 221.13 L220.67 221.05 L220.34 220.90 L220.02 220.71 L219.74 220.46 L219.47 220.17 L219.23 219.85 L219.01 219.51 L218.79 219.17 L218.57 218.84 L218.36 218.53 L218.12 218.25 L217.87 218.01 L217.59 217.80 L217.29 217.64 L216.96 217.51 L216.60 217.41 L216.23 217.33 L215.83 217.26 L215.44 217.18 L215.05 217.08 L214.67 216.96 L214.32 216.80 L214.00 216.61 L213.72 216.36 L213.49 216.08 L213.29 215.76 L213.14 215.40 L213.02 215.02 L212.93 214.62 L212.86 214.22 L212.79 213.82 L212.71 213.44 L212.62 213.08 L212.49 212.74 L212.33 212.43 L212.13 212.15 L211.89 211.89 L211.62 211.65 L211.31 211.43 L210.98 211.21 L210.64 210.98 L210.31 210.75 L209.99 210.50 L209.71 210.23 L209.46 209.94 L209.27 209.62 L209.13 209.28 L209.04 208.91 L209.01 208.53 L209.03 208.14 L209.08 207.73 L209.16 207.33 L209.25 206.93 L209.33 206.54 L209.39 206.16 L209.42 205.80 L209.41 205.44 L209.36 205.10 L209.25 204.76 L209.11 204.43 L208.92 204.11 L208.71 203.78 L208.48 203.45 L208.26 203.11 L208.04 202.76 L207.86 202.40 L207.72 202.04 L207.63 201.67 L207.60 201.30 L207.63 200.93 L207.72 200.56 L207.86 200.20 L208.04 199.84 L208.26 199.49 L208.48 199.15 L208.71 198.82 L208.92 198.49 L209.11 198.17 L209.25 197.84 L209.36 197.50 L209.41 197.16 L209.42 196.80 L209.39 196.44 L209.33 196.06 L209.25 195.67 L209.16 195.27 L209.08 194.87 L209.03 194.46 L209.01 194.07 L209.04 193.69 L209.13 193.32 L209.27 192.98 L209.46 192.66 L209.71 192.37 L209.99 192.10 L210.31 191.85 L210.64 191.62 L210.98 191.39 L211.31 191.17 L211.62 190.95 L211.89 190.71 L212.13 190.45 L212.33 190.17 L212.49 189.86 L212.62 189.52 L212.71 189.16 L212.79 188.78 L212.86 188.38 L212.93 187.98 L213.02 187.58 L213.14 187.20 L213.29 186.84 L213.49 186.52 L213.72 186.24 L214.00 185.99 L214.32 185.80 L214.67 185.64 L215.05 185.52 L215.44 185.42 L215.83 185.34 L216.23 185.27 L216.60 185.19 L216.96 185.09 L217.29 184.96 L217.59 184.80 L217.87 184.59 L218.12 184.35 L218.36 184.07 L218.57 183.76 L218.79 183.43 L219.01 183.09 L219.23 182.75 L219.47 182.43 L219.74 182.14 L220.02 181.89 L220.34 181.70 L220.67 181.55 L221.03 181.47 L221.41 181.43 L221.80 181.45 L222.19 181.50 L222.59 181.57 L222.98 181.66 L223.36 181.74 L223.73 181.80 L224.10 181.83 L224.44 181.82 L224.78 181.76 L225.11 181.66 L225.43 181.51 L225.75 181.32 L226.07 181.11 L226.40 180.88 L226.73 180.65 L227.07 180.44 L227.42 180.26 L227.77 180.12 L228.14 180.03 L228.50 180.00 L228.86 180.03 L229.23 180.12 L229.58 180.26 L229.93 180.44 L230.27 180.65 L230.60 180.88 L230.93 181.11 L231.25 181.32 L231.57 181.51 L231.89 181.66 L232.22 181.76 L232.56 181.82 L232.90 181.83 L233.27 181.80 L233.64 181.74 L234.02 181.66 L234.41 181.57 L234.81 181.50 L235.20 181.45 L235.59 181.43 L235.97 181.47 L236.33 181.55 L236.66 181.70 L236.98 181.89 L237.26 182.14 L237.53 182.43 L237.77 182.75 L237.99 183.09 L238.21 183.43 L238.43 183.76 L238.64 184.07 L238.88 184.35 L239.13 184.59 L239.41 184.80 L239.71 184.96 L240.04 185.09 L240.40 185.19 L240.77 185.27 L241.17 185.34 L241.56 185.42 L241.95 185.52 L242.33 185.64 L242.68 185.80 L243.00 185.99 L243.28 186.24 L243.51 186.52 L243.71 186.84 L243.86 187.20 L243.98 187.58 L244.07 187.98 L244.14 188.38 L244.21 188.78 L244.29 189.16 L244.38 189.52 L244.51 189.86 L244.67 190.17 L244.87 190.45 L245.11 190.71 L245.38 190.95 L245.69 191.17 L246.02 191.39 L246.36 191.62 L246.69 191.85 L247.01 192.10 L247.29 192.37 L247.54 192.66 L247.73 192.98 L247.87 193.32 L247.96 193.69 L247.99 194.07 L247.97 194.46 L247.92 194.87 L247.84 195.27 L247.75 195.67 L247.67 196.06 L247.61 196.44 L247.58 196.80 L247.59 197.16 L247.64 197.50 L247.75 197.84 L247.89 198.17 L248.08 198.49 L248.29 198.82 L248.52 199.15 L248.74 199.49 L248.96 199.84 L249.14 200.20 L249.28 200.56 L249.37 200.93 Z" fill="#e3e3e3"/>
<rect x="188.5" y="184.5" width="82" height="35" fill="none" stroke="#fff" stroke-width="1" stroke-dasharray="1 1" stroke-dashoffset="0.5"/>
<rect x="188.5" y="184.5" width="82" height="35" fill="none" stroke="#000" stroke-width="1" stroke-dasharray="1 1" stroke-dashoffset="1.5"/>
<rect x="197.5" y="223.5" width="64" height="6" fill="none" stroke="#fff" stroke-width="1" stroke-dasharray="1 1" stroke-dashoffset="0.5"/>
<rect x="197.5" y="223.5" width="64" height="6" fill="none" stroke="#000" stroke-width="1" stroke-dasharray="1 1" stroke-dashoffset="1.5"/>
<rect x="286.5" y="174.5" width="99" height="57" fill="#ffffff" stroke="#1f2a44" stroke-width="1" />
<rect x="288" y="176" width="96" height="54" fill="#e3e3e3" />
<path d="M288 176 H293.3 Q295.9 179.86 293.3 183.71 Q295.9 187.57 293.3 191.43 Q295.9 195.29 293.3 199.14 Q295.9 203.00 293.3 206.86 Q295.9 210.71 293.3 214.57 Q295.9 218.43 293.3 222.29 Q295.9 226.14 293.3 230.00 H288 Z" fill="#050100"/>
<rect x="382" y="176" width="2.3" height="54" fill="#f07305" />
<rect x="297.5" y="179.5" width="81" height="11" fill="none" stroke="#111" stroke-width="1" stroke-dasharray="1 1" stroke-dashoffset="0.5"/>
<rect x="297.5" y="194.5" width="81" height="28" fill="none" stroke="#111" stroke-width="1" stroke-dasharray="1 1" stroke-dashoffset="0.5"/>
<g transform="translate(338,208) scale(1.0)"><rect x="-18" y="-6" width="8" height="5" fill="#fff" stroke="#9a9a9a" stroke-width="0.8"/><rect x="-18" y="-6" width="8" height="1.5" fill="#9a9a9a"/><rect x="-8" y="-6" width="2" height="5" fill="#2a62b8"/><rect x="-5.5" y="-7" width="2" height="6" fill="#e8a020"/><rect x="-3" y="-5" width="2" height="4" fill="#2a62b8"/><rect x="1" y="-6" width="5" height="2" fill="#2c8a4a"/><rect x="2" y="-3.5" width="7" height="3" fill="#fff" stroke="#9a9a9a" stroke-width="0.8"/><circle cx="13" cy="-3" r="3.2" fill="#fff" stroke="#9a9a9a" stroke-width="0.8"/><path d="M10 -1 L14 -4 L16 -2 L12 4" stroke="#2a62b8" stroke-width="2" fill="none"/><rect x="-18" y="1" width="8" height="5" fill="#fff" stroke="#7a9ad0" stroke-width="0.8"/><path d="M-17 5 L-14 3 L-11 5" stroke="#2a62b8" fill="none" stroke-width="0.9"/><rect x="-8" y="1" width="7" height="5" fill="#fff" stroke="#7a9ad0" stroke-width="0.8"/><path d="M-7.5 5.5 L-5 2.5 L-2 5.5 Z" fill="#2a62b8"/><rect x="1" y="1" width="7" height="4" fill="#fff" stroke="#9a9a9a" stroke-width="0.8"/><path d="M10 3 L13 6" stroke="#9a9a9a" stroke-width="1.2"/></g>
<rect x="394.5" y="174.5" width="99" height="57" fill="#ffffff" stroke="#1f2a44" stroke-width="1" />
<rect x="396" y="176" width="96" height="54" fill="#050100" />
<path d="M405.50 176.00 L405.88 177.00 L406.37 178.00 L406.91 179.00 L407.48 180.00 L408.07 181.00 L408.67 182.00 L409.28 183.00 L409.90 184.00 L410.51 185.00 L411.11 186.00 L411.69 187.00 L412.27 188.00 L412.82 189.00 L413.35 190.00 L413.85 191.00 L414.33 192.00 L414.77 193.00 L415.18 194.00 L415.55 195.00 L415.88 196.00 L416.17 197.00 L416.42 198.00 L416.63 199.00 L416.79 200.00 L416.91 201.00 L416.98 202.00 L417.00 203.00 L416.98 204.00 L416.91 205.00 L416.79 206.00 L416.63 207.00 L416.42 208.00 L416.17 209.00 L415.88 210.00 L415.55 211.00 L415.18 212.00 L414.77 213.00 L414.33 214.00 L413.85 215.00 L413.35 216.00 L412.82 217.00 L412.27 218.00 L411.69 219.00 L411.11 220.00 L410.51 221.00 L409.90 222.00 L409.28 223.00 L408.67 224.00 L408.07 225.00 L407.48 226.00 L406.91 227.00 L406.37 228.00 L405.88 229.00 L405.50 230.00 H396 V176 Z" fill="#e3e3e3"/>
<path d="M404.00 176.00 L404.38 177.00 L404.87 178.00 L405.41 179.00 L405.98 180.00 L406.57 181.00 L407.17 182.00 L407.78 183.00 L408.40 184.00 L409.01 185.00 L409.61 186.00 L410.19 187.00 L410.77 188.00 L411.32 189.00 L411.85 190.00 L412.35 191.00 L412.83 192.00 L413.27 193.00 L413.68 194.00 L414.05 195.00 L414.38 196.00 L414.67 197.00 L414.92 198.00 L415.13 199.00 L415.29 200.00 L415.41 201.00 L415.48 202.00 L415.50 203.00 L415.48 204.00 L415.41 205.00 L415.29 206.00 L415.13 207.00 L414.92 208.00 L414.67 209.00 L414.38 210.00 L414.05 211.00 L413.68 212.00 L413.27 213.00 L412.83 214.00 L412.35 215.00 L411.85 216.00 L411.32 217.00 L410.77 218.00 L410.19 219.00 L409.61 220.00 L409.01 221.00 L408.40 222.00 L407.78 223.00 L407.17 224.00 L406.57 225.00 L405.98 226.00 L405.41 227.00 L404.87 228.00 L404.38 229.00 L404.00 230.00" fill="none" stroke="#f07305" stroke-width="1.8" />
<rect x="421.5" y="184.5" width="65" height="32" fill="none" stroke="#fff" stroke-width="1" stroke-dasharray="1 1" stroke-dashoffset="0.5"/>
<rect x="421.5" y="216.5" width="56" height="9" fill="none" stroke="#fff" stroke-width="1" stroke-dasharray="1 1" stroke-dashoffset="0.5"/>
<text x="183.90" y="243.70" font-size="12" fill="#1a1a1a" textLength="89.16" lengthAdjust="spacingAndGlyphs"  stroke="#1a1a1a" stroke-width="0.28">Diapositiva titolo</text>
<text x="287.75" y="243.70" font-size="12" fill="#1a1a1a" textLength="97.46" lengthAdjust="spacingAndGlyphs"  stroke="#1a1a1a" stroke-width="0.28">Titolo e contenuto</text>
<text x="412.50" y="243.70" font-size="12" fill="#1a1a1a" textLength="63.96" lengthAdjust="spacingAndGlyphs"  stroke="#1a1a1a" stroke-width="0.28">Intestazione</text>
<text x="424.50" y="258.70" font-size="12" fill="#1a1a1a" textLength="39.96" lengthAdjust="spacingAndGlyphs"  stroke="#1a1a1a" stroke-width="0.28">sezione</text>
<rect x="178.5" y="270.5" width="99" height="57" fill="#ffffff" stroke="#1f2a44" stroke-width="1" />
<rect x="180" y="272" width="96" height="54" fill="#e3e3e3" />
<path d="M180 272 H185.3 Q187.9 275.86 185.3 279.71 Q187.9 283.57 185.3 287.43 Q187.9 291.29 185.3 295.14 Q187.9 299.00 185.3 302.86 Q187.9 306.71 185.3 310.57 Q187.9 314.43 185.3 318.29 Q187.9 322.14 185.3 326.00 H180 Z" fill="#050100"/>
<rect x="274" y="272" width="2.3" height="54" fill="#f07305" />
<rect x="189.5" y="275.5" width="81" height="11" fill="none" stroke="#111" stroke-width="1" stroke-dasharray="1 1" stroke-dashoffset="0.5"/>
<rect x="189.5" y="289.5" width="39" height="29" fill="none" stroke="#111" stroke-width="1" stroke-dasharray="1 1" stroke-dashoffset="0.5"/>
<rect x="232.5" y="289.5" width="39" height="29" fill="none" stroke="#111" stroke-width="1" stroke-dasharray="1 1" stroke-dashoffset="0.5"/>
<g transform="translate(208.5,304) scale(0.75)"><rect x="-18" y="-6" width="8" height="5" fill="#fff" stroke="#9a9a9a" stroke-width="0.8"/><rect x="-18" y="-6" width="8" height="1.5" fill="#9a9a9a"/><rect x="-8" y="-6" width="2" height="5" fill="#2a62b8"/><rect x="-5.5" y="-7" width="2" height="6" fill="#e8a020"/><rect x="-3" y="-5" width="2" height="4" fill="#2a62b8"/><rect x="1" y="-6" width="5" height="2" fill="#2c8a4a"/><rect x="2" y="-3.5" width="7" height="3" fill="#fff" stroke="#9a9a9a" stroke-width="0.8"/><circle cx="13" cy="-3" r="3.2" fill="#fff" stroke="#9a9a9a" stroke-width="0.8"/><path d="M10 -1 L14 -4 L16 -2 L12 4" stroke="#2a62b8" stroke-width="2" fill="none"/><rect x="-18" y="1" width="8" height="5" fill="#fff" stroke="#7a9ad0" stroke-width="0.8"/><path d="M-17 5 L-14 3 L-11 5" stroke="#2a62b8" fill="none" stroke-width="0.9"/><rect x="-8" y="1" width="7" height="5" fill="#fff" stroke="#7a9ad0" stroke-width="0.8"/><path d="M-7.5 5.5 L-5 2.5 L-2 5.5 Z" fill="#2a62b8"/><rect x="1" y="1" width="7" height="4" fill="#fff" stroke="#9a9a9a" stroke-width="0.8"/><path d="M10 3 L13 6" stroke="#9a9a9a" stroke-width="1.2"/></g>
<g transform="translate(251.5,304) scale(0.75)"><rect x="-18" y="-6" width="8" height="5" fill="#fff" stroke="#9a9a9a" stroke-width="0.8"/><rect x="-18" y="-6" width="8" height="1.5" fill="#9a9a9a"/><rect x="-8" y="-6" width="2" height="5" fill="#2a62b8"/><rect x="-5.5" y="-7" width="2" height="6" fill="#e8a020"/><rect x="-3" y="-5" width="2" height="4" fill="#2a62b8"/><rect x="1" y="-6" width="5" height="2" fill="#2c8a4a"/><rect x="2" y="-3.5" width="7" height="3" fill="#fff" stroke="#9a9a9a" stroke-width="0.8"/><circle cx="13" cy="-3" r="3.2" fill="#fff" stroke="#9a9a9a" stroke-width="0.8"/><path d="M10 -1 L14 -4 L16 -2 L12 4" stroke="#2a62b8" stroke-width="2" fill="none"/><rect x="-18" y="1" width="8" height="5" fill="#fff" stroke="#7a9ad0" stroke-width="0.8"/><path d="M-17 5 L-14 3 L-11 5" stroke="#2a62b8" fill="none" stroke-width="0.9"/><rect x="-8" y="1" width="7" height="5" fill="#fff" stroke="#7a9ad0" stroke-width="0.8"/><path d="M-7.5 5.5 L-5 2.5 L-2 5.5 Z" fill="#2a62b8"/><rect x="1" y="1" width="7" height="4" fill="#fff" stroke="#9a9a9a" stroke-width="0.8"/><path d="M10 3 L13 6" stroke="#9a9a9a" stroke-width="1.2"/></g>
<rect x="286.5" y="270.5" width="99" height="57" fill="#ffffff" stroke="#1f2a44" stroke-width="1" />
<rect x="288" y="272" width="96" height="54" fill="#e3e3e3" />
<path d="M288 272 H293.3 Q295.9 275.86 293.3 279.71 Q295.9 283.57 293.3 287.43 Q295.9 291.29 293.3 295.14 Q295.9 299.00 293.3 302.86 Q295.9 306.71 293.3 310.57 Q295.9 314.43 293.3 318.29 Q295.9 322.14 293.3 326.00 H288 Z" fill="#050100"/>
<rect x="382" y="272" width="2.3" height="54" fill="#f07305" />
<rect x="297.5" y="275.5" width="81" height="11" fill="none" stroke="#111" stroke-width="1" stroke-dasharray="1 1" stroke-dashoffset="0.5"/>
<rect x="297.5" y="289.5" width="39" height="5" fill="none" stroke="#111" stroke-width="1" stroke-dasharray="1 1" stroke-dashoffset="0.5"/>
<rect x="340.5" y="289.5" width="39" height="5" fill="none" stroke="#111" stroke-width="1" stroke-dasharray="1 1" stroke-dashoffset="0.5"/>
<rect x="297.5" y="295.5" width="39" height="23" fill="none" stroke="#111" stroke-width="1" stroke-dasharray="1 1" stroke-dashoffset="0.5"/>
<rect x="340.5" y="295.5" width="39" height="23" fill="none" stroke="#111" stroke-width="1" stroke-dasharray="1 1" stroke-dashoffset="0.5"/>
<g transform="translate(316.5,306) scale(0.75)"><rect x="-18" y="-6" width="8" height="5" fill="#fff" stroke="#9a9a9a" stroke-width="0.8"/><rect x="-18" y="-6" width="8" height="1.5" fill="#9a9a9a"/><rect x="-8" y="-6" width="2" height="5" fill="#2a62b8"/><rect x="-5.5" y="-7" width="2" height="6" fill="#e8a020"/><rect x="-3" y="-5" width="2" height="4" fill="#2a62b8"/><rect x="1" y="-6" width="5" height="2" fill="#2c8a4a"/><rect x="2" y="-3.5" width="7" height="3" fill="#fff" stroke="#9a9a9a" stroke-width="0.8"/><circle cx="13" cy="-3" r="3.2" fill="#fff" stroke="#9a9a9a" stroke-width="0.8"/><path d="M10 -1 L14 -4 L16 -2 L12 4" stroke="#2a62b8" stroke-width="2" fill="none"/><rect x="-18" y="1" width="8" height="5" fill="#fff" stroke="#7a9ad0" stroke-width="0.8"/><path d="M-17 5 L-14 3 L-11 5" stroke="#2a62b8" fill="none" stroke-width="0.9"/><rect x="-8" y="1" width="7" height="5" fill="#fff" stroke="#7a9ad0" stroke-width="0.8"/><path d="M-7.5 5.5 L-5 2.5 L-2 5.5 Z" fill="#2a62b8"/><rect x="1" y="1" width="7" height="4" fill="#fff" stroke="#9a9a9a" stroke-width="0.8"/><path d="M10 3 L13 6" stroke="#9a9a9a" stroke-width="1.2"/></g>
<g transform="translate(359.5,306) scale(0.75)"><rect x="-18" y="-6" width="8" height="5" fill="#fff" stroke="#9a9a9a" stroke-width="0.8"/><rect x="-18" y="-6" width="8" height="1.5" fill="#9a9a9a"/><rect x="-8" y="-6" width="2" height="5" fill="#2a62b8"/><rect x="-5.5" y="-7" width="2" height="6" fill="#e8a020"/><rect x="-3" y="-5" width="2" height="4" fill="#2a62b8"/><rect x="1" y="-6" width="5" height="2" fill="#2c8a4a"/><rect x="2" y="-3.5" width="7" height="3" fill="#fff" stroke="#9a9a9a" stroke-width="0.8"/><circle cx="13" cy="-3" r="3.2" fill="#fff" stroke="#9a9a9a" stroke-width="0.8"/><path d="M10 -1 L14 -4 L16 -2 L12 4" stroke="#2a62b8" stroke-width="2" fill="none"/><rect x="-18" y="1" width="8" height="5" fill="#fff" stroke="#7a9ad0" stroke-width="0.8"/><path d="M-17 5 L-14 3 L-11 5" stroke="#2a62b8" fill="none" stroke-width="0.9"/><rect x="-8" y="1" width="7" height="5" fill="#fff" stroke="#7a9ad0" stroke-width="0.8"/><path d="M-7.5 5.5 L-5 2.5 L-2 5.5 Z" fill="#2a62b8"/><rect x="1" y="1" width="7" height="4" fill="#fff" stroke="#9a9a9a" stroke-width="0.8"/><path d="M10 3 L13 6" stroke="#9a9a9a" stroke-width="1.2"/></g>
<rect x="394.5" y="270.5" width="99" height="57" fill="#ffffff" stroke="#1f2a44" stroke-width="1" />
<rect x="396" y="272" width="96" height="54" fill="#e3e3e3" />
<path d="M396 272 H401.3 Q403.9 275.86 401.3 279.71 Q403.9 283.57 401.3 287.43 Q403.9 291.29 401.3 295.14 Q403.9 299.00 401.3 302.86 Q403.9 306.71 401.3 310.57 Q403.9 314.43 401.3 318.29 Q403.9 322.14 401.3 326.00 H396 Z" fill="#050100"/>
<rect x="490" y="272" width="2.3" height="54" fill="#f07305" />
<rect x="405.5" y="275.5" width="81" height="11" fill="none" stroke="#111" stroke-width="1" stroke-dasharray="1 1" stroke-dashoffset="0.5"/>
<text x="190.65" y="339.60" font-size="12" fill="#1a1a1a" textLength="75.66" lengthAdjust="spacingAndGlyphs"  stroke="#1a1a1a" stroke-width="0.28">Due contenuti</text>
<text x="308.85" y="339.60" font-size="12" fill="#1a1a1a" textLength="55.26" lengthAdjust="spacingAndGlyphs"  stroke="#1a1a1a" stroke-width="0.28">Confronto</text>
<text x="417.10" y="339.60" font-size="12" fill="#1a1a1a" textLength="54.76" lengthAdjust="spacingAndGlyphs"  stroke="#1a1a1a" stroke-width="0.28">Solo titolo</text>
<rect x="178.5" y="366.5" width="99" height="57" fill="#ffffff" stroke="#1f2a44" stroke-width="1" />
<rect x="180" y="368" width="96" height="54" fill="#e3e3e3" />
<path d="M180 368 H185.3 Q187.9 371.86 185.3 375.71 Q187.9 379.57 185.3 383.43 Q187.9 387.29 185.3 391.14 Q187.9 395.00 185.3 398.86 Q187.9 402.71 185.3 406.57 Q187.9 410.43 185.3 414.29 Q187.9 418.14 185.3 422.00 H180 Z" fill="#050100"/>
<rect x="274" y="368" width="2.3" height="54" fill="#f07305" />
<rect x="286.5" y="366.5" width="99" height="57" fill="#ffffff" stroke="#1f2a44" stroke-width="1" />
<rect x="288" y="368" width="96" height="54" fill="#e3e3e3" />
<rect x="288.4" y="368" width="1.9" height="54" fill="#f07305" />
<path d="M384 368 H347.2 Q344.6 371.86 347.2 375.71 Q344.6 379.57 347.2 383.43 Q344.6 387.29 347.2 391.14 Q344.6 395.00 347.2 398.86 Q344.6 402.71 347.2 406.57 Q344.6 410.43 347.2 414.29 Q344.6 418.14 347.2 422.00 H384 Z" fill="#050100"/>
<rect x="294.5" y="375.5" width="49" height="39" fill="none" stroke="#111" stroke-width="1" stroke-dasharray="1 1" stroke-dashoffset="0.5"/>
<g transform="translate(319,395) scale(0.85)"><rect x="-18" y="-6" width="8" height="5" fill="#fff" stroke="#9a9a9a" stroke-width="0.8"/><rect x="-18" y="-6" width="8" height="1.5" fill="#9a9a9a"/><rect x="-8" y="-6" width="2" height="5" fill="#2a62b8"/><rect x="-5.5" y="-7" width="2" height="6" fill="#e8a020"/><rect x="-3" y="-5" width="2" height="4" fill="#2a62b8"/><rect x="1" y="-6" width="5" height="2" fill="#2c8a4a"/><rect x="2" y="-3.5" width="7" height="3" fill="#fff" stroke="#9a9a9a" stroke-width="0.8"/><circle cx="13" cy="-3" r="3.2" fill="#fff" stroke="#9a9a9a" stroke-width="0.8"/><path d="M10 -1 L14 -4 L16 -2 L12 4" stroke="#2a62b8" stroke-width="2" fill="none"/><rect x="-18" y="1" width="8" height="5" fill="#fff" stroke="#7a9ad0" stroke-width="0.8"/><path d="M-17 5 L-14 3 L-11 5" stroke="#2a62b8" fill="none" stroke-width="0.9"/><rect x="-8" y="1" width="7" height="5" fill="#fff" stroke="#7a9ad0" stroke-width="0.8"/><path d="M-7.5 5.5 L-5 2.5 L-2 5.5 Z" fill="#2a62b8"/><rect x="1" y="1" width="7" height="4" fill="#fff" stroke="#9a9a9a" stroke-width="0.8"/><path d="M10 3 L13 6" stroke="#9a9a9a" stroke-width="1.2"/></g>
<rect x="353.5" y="371.5" width="25" height="10" fill="none" stroke="#fff" stroke-width="1" stroke-dasharray="1 1" stroke-dashoffset="0.5"/>
<rect x="353.5" y="381.5" width="25" height="33" fill="none" stroke="#fff" stroke-width="1" stroke-dasharray="1 1" stroke-dashoffset="0.5"/>
<rect x="394.5" y="366.5" width="99" height="57" fill="#ffffff" stroke="#1f2a44" stroke-width="1" />
<rect x="396" y="368" width="96" height="54" fill="#e3e3e3" />
<rect x="396.4" y="368" width="1.9" height="54" fill="#f07305" />
<path d="M492 368 H455.4 Q452.8 371.86 455.4 375.71 Q452.8 379.57 455.4 383.43 Q452.8 387.29 455.4 391.14 Q452.8 395.00 455.4 398.86 Q452.8 402.71 455.4 406.57 Q452.8 410.43 455.4 414.29 Q452.8 418.14 455.4 422.00 H492 Z" fill="#050100"/>
<rect x="398.5" y="368.5" width="55" height="53" fill="none" stroke="#111" stroke-width="1" stroke-dasharray="1 1" stroke-dashoffset="0.5"/>
<rect x="423.1" y="391.8" width="9" height="6" fill="#fff" stroke="#7a9ad0" stroke-width="0.8"/>
<path d="M423.6 397.3 L426.6 394.8 L431.6 397.3 Z" fill="#2a62b8"/>
<circle cx="430.1" cy="393.3" r="0.9" fill="#e8a020"/>
<rect x="462.5" y="371.5" width="24" height="10" fill="none" stroke="#fff" stroke-width="1" stroke-dasharray="1 1" stroke-dashoffset="0.5"/>
<rect x="462.5" y="381.5" width="24" height="33" fill="none" stroke="#fff" stroke-width="1" stroke-dasharray="1 1" stroke-dashoffset="0.5"/>
<text x="212.70" y="435.50" font-size="12" fill="#1a1a1a" textLength="31.56" lengthAdjust="spacingAndGlyphs"  stroke="#1a1a1a" stroke-width="0.28">Vuota</text>
<text x="296.25" y="435.50" font-size="12" fill="#1a1a1a" textLength="80.46" lengthAdjust="spacingAndGlyphs"  stroke="#1a1a1a" stroke-width="0.28">Contenuto con</text>
<text x="310.15" y="450.50" font-size="12" fill="#1a1a1a" textLength="52.66" lengthAdjust="spacingAndGlyphs"  stroke="#1a1a1a" stroke-width="0.28">didascalia</text>
<text x="405.75" y="435.50" font-size="12" fill="#1a1a1a" textLength="77.46" lengthAdjust="spacingAndGlyphs"  stroke="#1a1a1a" stroke-width="0.28">Immagine con</text>
<text x="418.15" y="450.50" font-size="12" fill="#1a1a1a" textLength="52.66" lengthAdjust="spacingAndGlyphs"  stroke="#1a1a1a" stroke-width="0.28">didascalia</text>
<rect x="174" y="467" width="324" height="1" fill="#d2d2d2" />
<text x="188.00" y="486.80" font-size="12" fill="#1a1a1a" font-weight="bold" textLength="121.96" lengthAdjust="spacingAndGlyphs"  stroke="#1a1a1a" stroke-width="0.28">Personalizza struttura</text>
<rect x="178.5" y="501.5" width="99" height="57" fill="#ffffff" stroke="#1f2a44" stroke-width="1" />
<rect x="191.5" y="511.5" width="73" height="34" fill="none" stroke="#111" stroke-width="1" stroke-dasharray="1 1" stroke-dashoffset="0.5"/>
<line x1="192.5" y1="531.5" x2="264.5" y2="531.5" stroke="#111" stroke-width="1" stroke-dasharray="1 1" stroke-dashoffset="0.5"/>
<rect x="286.5" y="501.5" width="99" height="57" fill="#ffffff" stroke="#1f2a44" stroke-width="1" />
<rect x="294.5" y="505.5" width="84" height="12" fill="none" stroke="#111" stroke-width="1" stroke-dasharray="1 1" stroke-dashoffset="0.5"/>
<rect x="294.5" y="517.5" width="84" height="35" fill="none" stroke="#111" stroke-width="1" stroke-dasharray="1 1" stroke-dashoffset="0.5"/>
<g transform="translate(336,534) scale(0.85)"><rect x="-18" y="-6" width="8" height="5" fill="#fff" stroke="#9a9a9a" stroke-width="0.8"/><rect x="-18" y="-6" width="8" height="1.5" fill="#9a9a9a"/><rect x="-8" y="-6" width="2" height="5" fill="#2a62b8"/><rect x="-5.5" y="-7" width="2" height="6" fill="#e8a020"/><rect x="-3" y="-5" width="2" height="4" fill="#2a62b8"/><rect x="1" y="-6" width="5" height="2" fill="#2c8a4a"/><rect x="2" y="-3.5" width="7" height="3" fill="#fff" stroke="#9a9a9a" stroke-width="0.8"/><circle cx="13" cy="-3" r="3.2" fill="#fff" stroke="#9a9a9a" stroke-width="0.8"/><path d="M10 -1 L14 -4 L16 -2 L12 4" stroke="#2a62b8" stroke-width="2" fill="none"/><rect x="-18" y="1" width="8" height="5" fill="#fff" stroke="#7a9ad0" stroke-width="0.8"/><path d="M-17 5 L-14 3 L-11 5" stroke="#2a62b8" fill="none" stroke-width="0.9"/><rect x="-8" y="1" width="7" height="5" fill="#fff" stroke="#7a9ad0" stroke-width="0.8"/><path d="M-7.5 5.5 L-5 2.5 L-2 5.5 Z" fill="#2a62b8"/><rect x="1" y="1" width="7" height="4" fill="#fff" stroke="#9a9a9a" stroke-width="0.8"/><path d="M10 3 L13 6" stroke="#9a9a9a" stroke-width="1.2"/></g>
<rect x="394.5" y="501.5" width="99" height="57" fill="#ffffff" stroke="#1f2a44" stroke-width="1" />
<rect x="402.5" y="516.5" width="84" height="23" fill="none" stroke="#111" stroke-width="1" stroke-dasharray="1 1" stroke-dashoffset="0.5"/>
<rect x="402.5" y="540.5" width="84" height="11" fill="none" stroke="#111" stroke-width="1" stroke-dasharray="1 1" stroke-dashoffset="0.5"/>
<text x="183.90" y="571.00" font-size="12" fill="#1a1a1a" textLength="89.16" lengthAdjust="spacingAndGlyphs"  stroke="#1a1a1a" stroke-width="0.28">Diapositiva titolo</text>
<text x="287.75" y="571.00" font-size="12" fill="#1a1a1a" textLength="97.46" lengthAdjust="spacingAndGlyphs"  stroke="#1a1a1a" stroke-width="0.28">Titolo e contenuto</text>
<text x="412.50" y="571.00" font-size="12" fill="#1a1a1a" textLength="63.96" lengthAdjust="spacingAndGlyphs"  stroke="#1a1a1a" stroke-width="0.28">Intestazione</text>
<text x="424.50" y="586.00" font-size="12" fill="#1a1a1a" textLength="39.96" lengthAdjust="spacingAndGlyphs"  stroke="#1a1a1a" stroke-width="0.28">sezione</text>
<rect x="178.5" y="597.5" width="99" height="57" fill="#ffffff" stroke="#1f2a44" stroke-width="1" />
<rect x="186.5" y="601.5" width="84" height="12" fill="none" stroke="#111" stroke-width="1" stroke-dasharray="1 1" stroke-dashoffset="0.5"/>
<rect x="186.5" y="613.5" width="42" height="35" fill="none" stroke="#111" stroke-width="1" stroke-dasharray="1 1" stroke-dashoffset="0.5"/>
<rect x="228.5" y="613.5" width="42" height="35" fill="none" stroke="#111" stroke-width="1" stroke-dasharray="1 1" stroke-dashoffset="0.5"/>
<g transform="translate(208,630) scale(0.75)"><rect x="-18" y="-6" width="8" height="5" fill="#fff" stroke="#9a9a9a" stroke-width="0.8"/><rect x="-18" y="-6" width="8" height="1.5" fill="#9a9a9a"/><rect x="-8" y="-6" width="2" height="5" fill="#2a62b8"/><rect x="-5.5" y="-7" width="2" height="6" fill="#e8a020"/><rect x="-3" y="-5" width="2" height="4" fill="#2a62b8"/><rect x="1" y="-6" width="5" height="2" fill="#2c8a4a"/><rect x="2" y="-3.5" width="7" height="3" fill="#fff" stroke="#9a9a9a" stroke-width="0.8"/><circle cx="13" cy="-3" r="3.2" fill="#fff" stroke="#9a9a9a" stroke-width="0.8"/><path d="M10 -1 L14 -4 L16 -2 L12 4" stroke="#2a62b8" stroke-width="2" fill="none"/><rect x="-18" y="1" width="8" height="5" fill="#fff" stroke="#7a9ad0" stroke-width="0.8"/><path d="M-17 5 L-14 3 L-11 5" stroke="#2a62b8" fill="none" stroke-width="0.9"/><rect x="-8" y="1" width="7" height="5" fill="#fff" stroke="#7a9ad0" stroke-width="0.8"/><path d="M-7.5 5.5 L-5 2.5 L-2 5.5 Z" fill="#2a62b8"/><rect x="1" y="1" width="7" height="4" fill="#fff" stroke="#9a9a9a" stroke-width="0.8"/><path d="M10 3 L13 6" stroke="#9a9a9a" stroke-width="1.2"/></g>
<g transform="translate(249,630) scale(0.75)"><rect x="-18" y="-6" width="8" height="5" fill="#fff" stroke="#9a9a9a" stroke-width="0.8"/><rect x="-18" y="-6" width="8" height="1.5" fill="#9a9a9a"/><rect x="-8" y="-6" width="2" height="5" fill="#2a62b8"/><rect x="-5.5" y="-7" width="2" height="6" fill="#e8a020"/><rect x="-3" y="-5" width="2" height="4" fill="#2a62b8"/><rect x="1" y="-6" width="5" height="2" fill="#2c8a4a"/><rect x="2" y="-3.5" width="7" height="3" fill="#fff" stroke="#9a9a9a" stroke-width="0.8"/><circle cx="13" cy="-3" r="3.2" fill="#fff" stroke="#9a9a9a" stroke-width="0.8"/><path d="M10 -1 L14 -4 L16 -2 L12 4" stroke="#2a62b8" stroke-width="2" fill="none"/><rect x="-18" y="1" width="8" height="5" fill="#fff" stroke="#7a9ad0" stroke-width="0.8"/><path d="M-17 5 L-14 3 L-11 5" stroke="#2a62b8" fill="none" stroke-width="0.9"/><rect x="-8" y="1" width="7" height="5" fill="#fff" stroke="#7a9ad0" stroke-width="0.8"/><path d="M-7.5 5.5 L-5 2.5 L-2 5.5 Z" fill="#2a62b8"/><rect x="1" y="1" width="7" height="4" fill="#fff" stroke="#9a9a9a" stroke-width="0.8"/><path d="M10 3 L13 6" stroke="#9a9a9a" stroke-width="1.2"/></g>
<rect x="286.5" y="597.5" width="99" height="57" fill="#ffffff" stroke="#1f2a44" stroke-width="1" />
<rect x="294.5" y="601.5" width="84" height="12" fill="none" stroke="#111" stroke-width="1" stroke-dasharray="1 1" stroke-dashoffset="0.5"/>
<rect x="294.5" y="613.5" width="42" height="5" fill="none" stroke="#111" stroke-width="1" stroke-dasharray="1 1" stroke-dashoffset="0.5"/>
<rect x="336.5" y="613.5" width="42" height="5" fill="none" stroke="#111" stroke-width="1" stroke-dasharray="1 1" stroke-dashoffset="0.5"/>
<rect x="294.5" y="619.5" width="42" height="29" fill="none" stroke="#111" stroke-width="1" stroke-dasharray="1 1" stroke-dashoffset="0.5"/>
<rect x="337.5" y="619.5" width="41" height="29" fill="none" stroke="#111" stroke-width="1" stroke-dasharray="1 1" stroke-dashoffset="0.5"/>
<g transform="translate(315,633) scale(0.75)"><rect x="-18" y="-6" width="8" height="5" fill="#fff" stroke="#9a9a9a" stroke-width="0.8"/><rect x="-18" y="-6" width="8" height="1.5" fill="#9a9a9a"/><rect x="-8" y="-6" width="2" height="5" fill="#2a62b8"/><rect x="-5.5" y="-7" width="2" height="6" fill="#e8a020"/><rect x="-3" y="-5" width="2" height="4" fill="#2a62b8"/><rect x="1" y="-6" width="5" height="2" fill="#2c8a4a"/><rect x="2" y="-3.5" width="7" height="3" fill="#fff" stroke="#9a9a9a" stroke-width="0.8"/><circle cx="13" cy="-3" r="3.2" fill="#fff" stroke="#9a9a9a" stroke-width="0.8"/><path d="M10 -1 L14 -4 L16 -2 L12 4" stroke="#2a62b8" stroke-width="2" fill="none"/><rect x="-18" y="1" width="8" height="5" fill="#fff" stroke="#7a9ad0" stroke-width="0.8"/><path d="M-17 5 L-14 3 L-11 5" stroke="#2a62b8" fill="none" stroke-width="0.9"/><rect x="-8" y="1" width="7" height="5" fill="#fff" stroke="#7a9ad0" stroke-width="0.8"/><path d="M-7.5 5.5 L-5 2.5 L-2 5.5 Z" fill="#2a62b8"/><rect x="1" y="1" width="7" height="4" fill="#fff" stroke="#9a9a9a" stroke-width="0.8"/><path d="M10 3 L13 6" stroke="#9a9a9a" stroke-width="1.2"/></g>
<g transform="translate(357,633) scale(0.75)"><rect x="-18" y="-6" width="8" height="5" fill="#fff" stroke="#9a9a9a" stroke-width="0.8"/><rect x="-18" y="-6" width="8" height="1.5" fill="#9a9a9a"/><rect x="-8" y="-6" width="2" height="5" fill="#2a62b8"/><rect x="-5.5" y="-7" width="2" height="6" fill="#e8a020"/><rect x="-3" y="-5" width="2" height="4" fill="#2a62b8"/><rect x="1" y="-6" width="5" height="2" fill="#2c8a4a"/><rect x="2" y="-3.5" width="7" height="3" fill="#fff" stroke="#9a9a9a" stroke-width="0.8"/><circle cx="13" cy="-3" r="3.2" fill="#fff" stroke="#9a9a9a" stroke-width="0.8"/><path d="M10 -1 L14 -4 L16 -2 L12 4" stroke="#2a62b8" stroke-width="2" fill="none"/><rect x="-18" y="1" width="8" height="5" fill="#fff" stroke="#7a9ad0" stroke-width="0.8"/><path d="M-17 5 L-14 3 L-11 5" stroke="#2a62b8" fill="none" stroke-width="0.9"/><rect x="-8" y="1" width="7" height="5" fill="#fff" stroke="#7a9ad0" stroke-width="0.8"/><path d="M-7.5 5.5 L-5 2.5 L-2 5.5 Z" fill="#2a62b8"/><rect x="1" y="1" width="7" height="4" fill="#fff" stroke="#9a9a9a" stroke-width="0.8"/><path d="M10 3 L13 6" stroke="#9a9a9a" stroke-width="1.2"/></g>
<rect x="394.5" y="597.5" width="99" height="57" fill="#ffffff" stroke="#1f2a44" stroke-width="1" />
<rect x="402.5" y="601.5" width="84" height="12" fill="none" stroke="#111" stroke-width="1" stroke-dasharray="1 1" stroke-dashoffset="0.5"/>
<text x="190.65" y="667.00" font-size="12" fill="#1a1a1a" textLength="75.66" lengthAdjust="spacingAndGlyphs"  stroke="#1a1a1a" stroke-width="0.28">Due contenuti</text>
<text x="308.85" y="667.00" font-size="12" fill="#1a1a1a" textLength="55.26" lengthAdjust="spacingAndGlyphs"  stroke="#1a1a1a" stroke-width="0.28">Confronto</text>
<text x="417.10" y="667.00" font-size="12" fill="#1a1a1a" textLength="54.76" lengthAdjust="spacingAndGlyphs"  stroke="#1a1a1a" stroke-width="0.28">Solo titolo</text>
<rect x="178.5" y="693.5" width="99" height="57" fill="#ffffff" stroke="#1f2a44" stroke-width="1" />
<rect x="286.5" y="693.5" width="99" height="57" fill="#ffffff" stroke="#1f2a44" stroke-width="1" />
<rect x="294.5" y="698.5" width="32" height="13" fill="none" stroke="#111" stroke-width="1" stroke-dasharray="1 1" stroke-dashoffset="0.5"/>
<rect x="294.5" y="711.5" width="32" height="30" fill="none" stroke="#111" stroke-width="1" stroke-dasharray="1 1" stroke-dashoffset="0.5"/>
<rect x="328.5" y="702.5" width="50" height="39" fill="none" stroke="#111" stroke-width="1" stroke-dasharray="1 1" stroke-dashoffset="0.5"/>
<g transform="translate(353,722) scale(0.85)"><rect x="-18" y="-6" width="8" height="5" fill="#fff" stroke="#9a9a9a" stroke-width="0.8"/><rect x="-18" y="-6" width="8" height="1.5" fill="#9a9a9a"/><rect x="-8" y="-6" width="2" height="5" fill="#2a62b8"/><rect x="-5.5" y="-7" width="2" height="6" fill="#e8a020"/><rect x="-3" y="-5" width="2" height="4" fill="#2a62b8"/><rect x="1" y="-6" width="5" height="2" fill="#2c8a4a"/><rect x="2" y="-3.5" width="7" height="3" fill="#fff" stroke="#9a9a9a" stroke-width="0.8"/><circle cx="13" cy="-3" r="3.2" fill="#fff" stroke="#9a9a9a" stroke-width="0.8"/><path d="M10 -1 L14 -4 L16 -2 L12 4" stroke="#2a62b8" stroke-width="2" fill="none"/><rect x="-18" y="1" width="8" height="5" fill="#fff" stroke="#7a9ad0" stroke-width="0.8"/><path d="M-17 5 L-14 3 L-11 5" stroke="#2a62b8" fill="none" stroke-width="0.9"/><rect x="-8" y="1" width="7" height="5" fill="#fff" stroke="#7a9ad0" stroke-width="0.8"/><path d="M-7.5 5.5 L-5 2.5 L-2 5.5 Z" fill="#2a62b8"/><rect x="1" y="1" width="7" height="4" fill="#fff" stroke="#9a9a9a" stroke-width="0.8"/><path d="M10 3 L13 6" stroke="#9a9a9a" stroke-width="1.2"/></g>
<rect x="394.5" y="693.5" width="99" height="57" fill="#ffffff" stroke="#1f2a44" stroke-width="1" />
<rect x="402.5" y="698.5" width="32" height="13" fill="none" stroke="#111" stroke-width="1" stroke-dasharray="1 1" stroke-dashoffset="0.5"/>
<rect x="402.5" y="711.5" width="32" height="30" fill="none" stroke="#111" stroke-width="1" stroke-dasharray="1 1" stroke-dashoffset="0.5"/>
<rect x="436.5" y="702.5" width="50" height="39" fill="none" stroke="#111" stroke-width="1" stroke-dasharray="1 1" stroke-dashoffset="0.5"/>
<rect x="456.5" y="719" width="9" height="6" fill="#fff" stroke="#7a9ad0" stroke-width="0.8"/>
<path d="M457 724.5 L460 722 L465 724.5 Z" fill="#2a62b8"/>
<circle cx="463.5" cy="720.5" r="0.9" fill="#e8a020"/>
<text x="212.70" y="763.00" font-size="12" fill="#1a1a1a" textLength="31.56" lengthAdjust="spacingAndGlyphs"  stroke="#1a1a1a" stroke-width="0.28">Vuota</text>
<text x="296.25" y="763.00" font-size="12" fill="#1a1a1a" textLength="80.46" lengthAdjust="spacingAndGlyphs"  stroke="#1a1a1a" stroke-width="0.28">Contenuto con</text>
<text x="310.15" y="778.00" font-size="12" fill="#1a1a1a" textLength="52.66" lengthAdjust="spacingAndGlyphs"  stroke="#1a1a1a" stroke-width="0.28">didascalia</text>
<text x="405.75" y="763.00" font-size="12" fill="#1a1a1a" textLength="77.46" lengthAdjust="spacingAndGlyphs"  stroke="#1a1a1a" stroke-width="0.28">Immagine con</text>
<text x="418.15" y="778.00" font-size="12" fill="#1a1a1a" textLength="52.66" lengthAdjust="spacingAndGlyphs"  stroke="#1a1a1a" stroke-width="0.28">didascalia</text>
<rect x="174" y="794" width="324" height="1" fill="#d2d2d2" />
<rect x="186.5" y="806.5" width="11" height="8" fill="none" stroke="#2a2a2a" stroke-width="1" />
<rect x="189.5" y="809.5" width="12" height="8" fill="#fff" stroke="#2a2a2a" stroke-width="1" />
<rect x="191.5" y="811.5" width="8" height="4" fill="none" stroke="#2a2a2a" stroke-width="0.8" />
<text x="211.20" y="814.00" font-size="12" fill="#1a1a1a" textLength="161.56" lengthAdjust="spacingAndGlyphs"  stroke="#1a1a1a" stroke-width="0.28">Duplica diapositive selezionate</text>
<line x1="211.5" y1="816.5" x2="220" y2="816.5" stroke="#1a1a1a" stroke-width="1" />
<rect x="188.5" y="829.5" width="11" height="14" fill="#fff" stroke="#2a2a2a" stroke-width="1" />
<path d="M191 833.5 H196 M191 836.5 H197 M191 839.5 H195" fill="none" stroke="#2a2a2a" stroke-width="0.8" />
<text x="211.20" y="842.00" font-size="12" fill="#1a1a1a" textLength="143.56" lengthAdjust="spacingAndGlyphs"  stroke="#1a1a1a" stroke-width="0.28">Diapositive dalla struttura...</text>
<line x1="219" y1="844.5" x2="222" y2="844.5" stroke="#1a1a1a" stroke-width="1" />
<rect x="186.5" y="859.5" width="15" height="10" fill="#fff" stroke="#2a2a2a" stroke-width="1" />
<rect x="188.5" y="861.5" width="11" height="6" fill="none" stroke="#2a2a2a" stroke-width="0.7" />
<line x1="186" y1="857.5" x2="191" y2="857.5" stroke="#1a7a30" stroke-width="1.2" />
<line x1="188.5" y1="855" x2="188.5" y2="860" stroke="#1a7a30" stroke-width="1.2" />
<text x="211.20" y="870.00" font-size="12" fill="#1a1a1a" textLength="115.76" lengthAdjust="spacingAndGlyphs"  stroke="#1a1a1a" stroke-width="0.28">Riutilizza diapositive...</text>
<line x1="241.5" y1="872.5" x2="246.5" y2="872.5" stroke="#1a1a1a" stroke-width="1" />
<rect x="169.5" y="66.5" width="77" height="74.5" fill="none" stroke="#f01414" stroke-width="3" />
</svg></body></html>
